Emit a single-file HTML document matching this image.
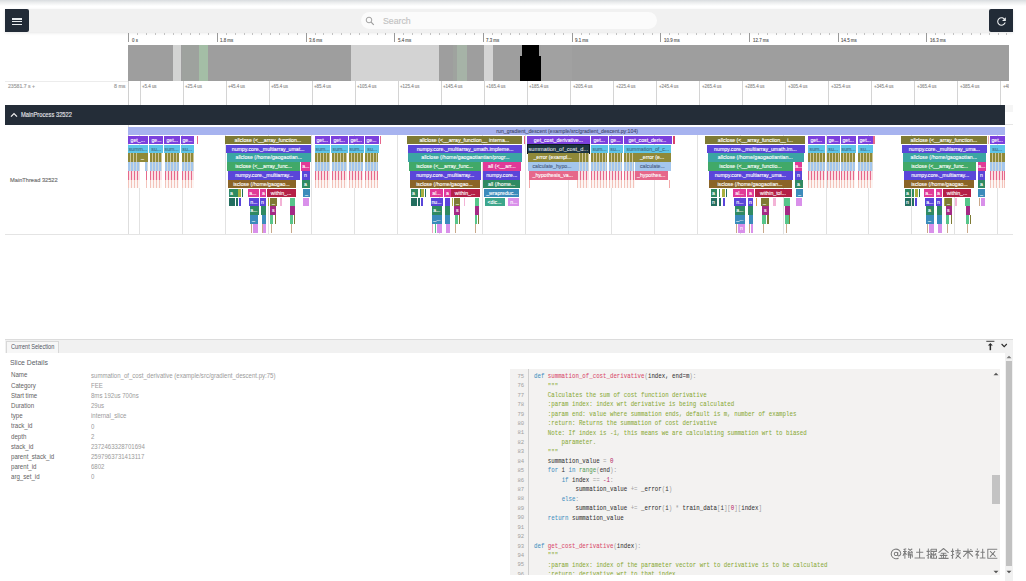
<!DOCTYPE html><html><head><meta charset="utf-8"><style>
html,body{margin:0;padding:0;}
body{width:1026px;height:581px;overflow:hidden;position:relative;background:#fff;font-family:"Liberation Sans",sans-serif;}
body div{position:absolute;box-sizing:border-box;}
.t{-webkit-text-stroke:0.14px currentColor;}
.c{-webkit-text-stroke:0.05px currentColor;}
.n{}
.s{height:8.5px;overflow:hidden;white-space:nowrap;text-align:center;font-size:5.6px;line-height:8.5px;color:#fff;}
.s span{transform:scaleX(0.93);-webkit-text-stroke:0.12px currentColor;}
.s span{display:inline-block;}
</style></head><body>
<div style="left:0.00px;top:0.00px;width:1026.00px;height:6.00px;background:linear-gradient(#d9dcdf,#e9ebec 35%,#fff);"></div>
<div style="left:5.00px;top:9.00px;width:1008.00px;height:23.30px;background:#f1f1f1;box-shadow:0 1px 3px rgba(0,0,0,0.10);"></div>
<div style="left:5.20px;top:9.00px;width:23.40px;height:23.20px;background:#222b37;border-radius:0 2px 2px 0;"></div>
<div style="left:12.00px;top:18.40px;width:10.00px;height:1.40px;background:#e8ecef;"></div>
<div style="left:12.00px;top:20.90px;width:10.00px;height:1.40px;background:#e8ecef;"></div>
<div style="left:12.00px;top:23.50px;width:10.00px;height:1.40px;background:#e8ecef;"></div>
<div style="left:989.30px;top:9.00px;width:23.70px;height:23.40px;background:#222b37;border-radius:2px 0 0 2px;"></div>
<svg style="position:absolute;left:994.9px;top:14.5px" width="13" height="13" viewBox="0 0 24 24"><path fill="#eef0f2" d="M17.65 6.35C16.2 4.9 14.21 4 12 4c-4.42 0-7.99 3.58-7.99 8s3.57 8 7.99 8c3.73 0 6.840-2.55 7.73-6h-2.08c-.82 2.33-3.04 4-5.65 4-3.31 0-6-2.69-6-6s2.69-6 6-6c1.66 0 3.14.69 4.22 1.78L13 11h7V4l-2.35 2.35z"/></svg>
<div style="left:361.20px;top:12.30px;width:296.00px;height:17.10px;background:#fbfbfb;border-radius:8.5px;"></div>
<svg style="position:absolute;left:364.5px;top:15.8px" width="10" height="10" viewBox="0 0 10 10"><circle cx="4" cy="4" r="2.8" fill="none" stroke="#9c9c9c" stroke-width="0.95"/><path d="M6.1 6.1 L8.8 8.8" stroke="#9c9c9c" stroke-width="1.15"/></svg>
<div class="t" style="left:383.00px;top:16.48px;font-size:9.2px;line-height:11.04px;color:#c2c2c2;font-family:'Liberation Sans', sans-serif;white-space:pre;transform:scaleX(0.95);transform-origin:0 50%;">Search</div>
<div style="left:128.15px;top:33.10px;width:0.90px;height:9.00px;background:#9a9a9a;"></div>
<div style="left:137.12px;top:33.00px;width:0.70px;height:1.60px;background:#c2c2c2;"></div>
<div style="left:145.99px;top:33.00px;width:0.70px;height:1.60px;background:#c2c2c2;"></div>
<div style="left:154.86px;top:33.00px;width:0.70px;height:1.60px;background:#c2c2c2;"></div>
<div style="left:163.73px;top:33.00px;width:0.70px;height:1.60px;background:#c2c2c2;"></div>
<div style="left:172.60px;top:33.00px;width:0.70px;height:1.60px;background:#c2c2c2;"></div>
<div style="left:181.47px;top:33.00px;width:0.70px;height:1.60px;background:#c2c2c2;"></div>
<div style="left:190.34px;top:33.00px;width:0.70px;height:1.60px;background:#c2c2c2;"></div>
<div style="left:199.21px;top:33.00px;width:0.70px;height:1.60px;background:#c2c2c2;"></div>
<div style="left:208.08px;top:33.00px;width:0.70px;height:1.60px;background:#c2c2c2;"></div>
<div style="left:216.85px;top:33.10px;width:0.90px;height:9.00px;background:#9a9a9a;"></div>
<div style="left:225.82px;top:33.00px;width:0.70px;height:1.60px;background:#c2c2c2;"></div>
<div style="left:234.69px;top:33.00px;width:0.70px;height:1.60px;background:#c2c2c2;"></div>
<div style="left:243.56px;top:33.00px;width:0.70px;height:1.60px;background:#c2c2c2;"></div>
<div style="left:252.43px;top:33.00px;width:0.70px;height:1.60px;background:#c2c2c2;"></div>
<div style="left:261.30px;top:33.00px;width:0.70px;height:1.60px;background:#c2c2c2;"></div>
<div style="left:270.17px;top:33.00px;width:0.70px;height:1.60px;background:#c2c2c2;"></div>
<div style="left:279.04px;top:33.00px;width:0.70px;height:1.60px;background:#c2c2c2;"></div>
<div style="left:287.91px;top:33.00px;width:0.70px;height:1.60px;background:#c2c2c2;"></div>
<div style="left:296.78px;top:33.00px;width:0.70px;height:1.60px;background:#c2c2c2;"></div>
<div style="left:305.55px;top:33.10px;width:0.90px;height:9.00px;background:#9a9a9a;"></div>
<div style="left:314.52px;top:33.00px;width:0.70px;height:1.60px;background:#c2c2c2;"></div>
<div style="left:323.39px;top:33.00px;width:0.70px;height:1.60px;background:#c2c2c2;"></div>
<div style="left:332.26px;top:33.00px;width:0.70px;height:1.60px;background:#c2c2c2;"></div>
<div style="left:341.13px;top:33.00px;width:0.70px;height:1.60px;background:#c2c2c2;"></div>
<div style="left:350.00px;top:33.00px;width:0.70px;height:1.60px;background:#c2c2c2;"></div>
<div style="left:358.87px;top:33.00px;width:0.70px;height:1.60px;background:#c2c2c2;"></div>
<div style="left:367.74px;top:33.00px;width:0.70px;height:1.60px;background:#c2c2c2;"></div>
<div style="left:376.61px;top:33.00px;width:0.70px;height:1.60px;background:#c2c2c2;"></div>
<div style="left:385.48px;top:33.00px;width:0.70px;height:1.60px;background:#c2c2c2;"></div>
<div style="left:394.25px;top:33.10px;width:0.90px;height:9.00px;background:#9a9a9a;"></div>
<div style="left:403.22px;top:33.00px;width:0.70px;height:1.60px;background:#c2c2c2;"></div>
<div style="left:412.09px;top:33.00px;width:0.70px;height:1.60px;background:#c2c2c2;"></div>
<div style="left:420.96px;top:33.00px;width:0.70px;height:1.60px;background:#c2c2c2;"></div>
<div style="left:429.83px;top:33.00px;width:0.70px;height:1.60px;background:#c2c2c2;"></div>
<div style="left:438.70px;top:33.00px;width:0.70px;height:1.60px;background:#c2c2c2;"></div>
<div style="left:447.57px;top:33.00px;width:0.70px;height:1.60px;background:#c2c2c2;"></div>
<div style="left:456.44px;top:33.00px;width:0.70px;height:1.60px;background:#c2c2c2;"></div>
<div style="left:465.31px;top:33.00px;width:0.70px;height:1.60px;background:#c2c2c2;"></div>
<div style="left:474.18px;top:33.00px;width:0.70px;height:1.60px;background:#c2c2c2;"></div>
<div style="left:482.95px;top:33.10px;width:0.90px;height:9.00px;background:#9a9a9a;"></div>
<div style="left:491.92px;top:33.00px;width:0.70px;height:1.60px;background:#c2c2c2;"></div>
<div style="left:500.79px;top:33.00px;width:0.70px;height:1.60px;background:#c2c2c2;"></div>
<div style="left:509.66px;top:33.00px;width:0.70px;height:1.60px;background:#c2c2c2;"></div>
<div style="left:518.53px;top:33.00px;width:0.70px;height:1.60px;background:#c2c2c2;"></div>
<div style="left:527.40px;top:33.00px;width:0.70px;height:1.60px;background:#c2c2c2;"></div>
<div style="left:536.27px;top:33.00px;width:0.70px;height:1.60px;background:#c2c2c2;"></div>
<div style="left:545.14px;top:33.00px;width:0.70px;height:1.60px;background:#c2c2c2;"></div>
<div style="left:554.01px;top:33.00px;width:0.70px;height:1.60px;background:#c2c2c2;"></div>
<div style="left:562.88px;top:33.00px;width:0.70px;height:1.60px;background:#c2c2c2;"></div>
<div style="left:571.65px;top:33.10px;width:0.90px;height:9.00px;background:#9a9a9a;"></div>
<div style="left:580.62px;top:33.00px;width:0.70px;height:1.60px;background:#c2c2c2;"></div>
<div style="left:589.49px;top:33.00px;width:0.70px;height:1.60px;background:#c2c2c2;"></div>
<div style="left:598.36px;top:33.00px;width:0.70px;height:1.60px;background:#c2c2c2;"></div>
<div style="left:607.23px;top:33.00px;width:0.70px;height:1.60px;background:#c2c2c2;"></div>
<div style="left:616.10px;top:33.00px;width:0.70px;height:1.60px;background:#c2c2c2;"></div>
<div style="left:624.97px;top:33.00px;width:0.70px;height:1.60px;background:#c2c2c2;"></div>
<div style="left:633.84px;top:33.00px;width:0.70px;height:1.60px;background:#c2c2c2;"></div>
<div style="left:642.71px;top:33.00px;width:0.70px;height:1.60px;background:#c2c2c2;"></div>
<div style="left:651.58px;top:33.00px;width:0.70px;height:1.60px;background:#c2c2c2;"></div>
<div style="left:660.35px;top:33.10px;width:0.90px;height:9.00px;background:#9a9a9a;"></div>
<div style="left:669.32px;top:33.00px;width:0.70px;height:1.60px;background:#c2c2c2;"></div>
<div style="left:678.19px;top:33.00px;width:0.70px;height:1.60px;background:#c2c2c2;"></div>
<div style="left:687.06px;top:33.00px;width:0.70px;height:1.60px;background:#c2c2c2;"></div>
<div style="left:695.93px;top:33.00px;width:0.70px;height:1.60px;background:#c2c2c2;"></div>
<div style="left:704.80px;top:33.00px;width:0.70px;height:1.60px;background:#c2c2c2;"></div>
<div style="left:713.67px;top:33.00px;width:0.70px;height:1.60px;background:#c2c2c2;"></div>
<div style="left:722.54px;top:33.00px;width:0.70px;height:1.60px;background:#c2c2c2;"></div>
<div style="left:731.41px;top:33.00px;width:0.70px;height:1.60px;background:#c2c2c2;"></div>
<div style="left:740.28px;top:33.00px;width:0.70px;height:1.60px;background:#c2c2c2;"></div>
<div style="left:749.05px;top:33.10px;width:0.90px;height:9.00px;background:#9a9a9a;"></div>
<div style="left:758.02px;top:33.00px;width:0.70px;height:1.60px;background:#c2c2c2;"></div>
<div style="left:766.89px;top:33.00px;width:0.70px;height:1.60px;background:#c2c2c2;"></div>
<div style="left:775.76px;top:33.00px;width:0.70px;height:1.60px;background:#c2c2c2;"></div>
<div style="left:784.63px;top:33.00px;width:0.70px;height:1.60px;background:#c2c2c2;"></div>
<div style="left:793.50px;top:33.00px;width:0.70px;height:1.60px;background:#c2c2c2;"></div>
<div style="left:802.37px;top:33.00px;width:0.70px;height:1.60px;background:#c2c2c2;"></div>
<div style="left:811.24px;top:33.00px;width:0.70px;height:1.60px;background:#c2c2c2;"></div>
<div style="left:820.11px;top:33.00px;width:0.70px;height:1.60px;background:#c2c2c2;"></div>
<div style="left:828.98px;top:33.00px;width:0.70px;height:1.60px;background:#c2c2c2;"></div>
<div style="left:837.75px;top:33.10px;width:0.90px;height:9.00px;background:#9a9a9a;"></div>
<div style="left:846.72px;top:33.00px;width:0.70px;height:1.60px;background:#c2c2c2;"></div>
<div style="left:855.59px;top:33.00px;width:0.70px;height:1.60px;background:#c2c2c2;"></div>
<div style="left:864.46px;top:33.00px;width:0.70px;height:1.60px;background:#c2c2c2;"></div>
<div style="left:873.33px;top:33.00px;width:0.70px;height:1.60px;background:#c2c2c2;"></div>
<div style="left:882.20px;top:33.00px;width:0.70px;height:1.60px;background:#c2c2c2;"></div>
<div style="left:891.07px;top:33.00px;width:0.70px;height:1.60px;background:#c2c2c2;"></div>
<div style="left:899.94px;top:33.00px;width:0.70px;height:1.60px;background:#c2c2c2;"></div>
<div style="left:908.81px;top:33.00px;width:0.70px;height:1.60px;background:#c2c2c2;"></div>
<div style="left:917.68px;top:33.00px;width:0.70px;height:1.60px;background:#c2c2c2;"></div>
<div style="left:926.45px;top:33.10px;width:0.90px;height:9.00px;background:#9a9a9a;"></div>
<div style="left:935.42px;top:33.00px;width:0.70px;height:1.60px;background:#c2c2c2;"></div>
<div style="left:944.29px;top:33.00px;width:0.70px;height:1.60px;background:#c2c2c2;"></div>
<div style="left:953.16px;top:33.00px;width:0.70px;height:1.60px;background:#c2c2c2;"></div>
<div style="left:962.03px;top:33.00px;width:0.70px;height:1.60px;background:#c2c2c2;"></div>
<div style="left:970.90px;top:33.00px;width:0.70px;height:1.60px;background:#c2c2c2;"></div>
<div style="left:979.77px;top:33.00px;width:0.70px;height:1.60px;background:#c2c2c2;"></div>
<div style="left:988.64px;top:33.00px;width:0.70px;height:1.60px;background:#c2c2c2;"></div>
<div style="left:997.51px;top:33.00px;width:0.70px;height:1.60px;background:#c2c2c2;"></div>
<div style="left:1006.38px;top:33.00px;width:0.70px;height:1.60px;background:#c2c2c2;"></div>
<div class="t" style="left:131.60px;top:37.46px;font-size:5.2px;line-height:6.24px;color:#5a5a5a;font-family:'Liberation Sans', sans-serif;white-space:pre;transform:scaleX(0.85);transform-origin:0 50%;">0 s</div>
<div class="t" style="left:220.30px;top:37.46px;font-size:5.2px;line-height:6.24px;color:#5a5a5a;font-family:'Liberation Sans', sans-serif;white-space:pre;transform:scaleX(0.85);transform-origin:0 50%;">1.8 ms</div>
<div class="t" style="left:309.00px;top:37.46px;font-size:5.2px;line-height:6.24px;color:#5a5a5a;font-family:'Liberation Sans', sans-serif;white-space:pre;transform:scaleX(0.85);transform-origin:0 50%;">3.6 ms</div>
<div class="t" style="left:397.70px;top:37.46px;font-size:5.2px;line-height:6.24px;color:#5a5a5a;font-family:'Liberation Sans', sans-serif;white-space:pre;transform:scaleX(0.85);transform-origin:0 50%;">5.4 ms</div>
<div class="t" style="left:486.40px;top:37.46px;font-size:5.2px;line-height:6.24px;color:#5a5a5a;font-family:'Liberation Sans', sans-serif;white-space:pre;transform:scaleX(0.85);transform-origin:0 50%;">7.3 ms</div>
<div class="t" style="left:575.10px;top:37.46px;font-size:5.2px;line-height:6.24px;color:#5a5a5a;font-family:'Liberation Sans', sans-serif;white-space:pre;transform:scaleX(0.85);transform-origin:0 50%;">9.1 ms</div>
<div class="t" style="left:663.80px;top:37.46px;font-size:5.2px;line-height:6.24px;color:#5a5a5a;font-family:'Liberation Sans', sans-serif;white-space:pre;transform:scaleX(0.85);transform-origin:0 50%;">10.9 ms</div>
<div class="t" style="left:752.50px;top:37.46px;font-size:5.2px;line-height:6.24px;color:#5a5a5a;font-family:'Liberation Sans', sans-serif;white-space:pre;transform:scaleX(0.85);transform-origin:0 50%;">12.7 ms</div>
<div class="t" style="left:841.20px;top:37.46px;font-size:5.2px;line-height:6.24px;color:#5a5a5a;font-family:'Liberation Sans', sans-serif;white-space:pre;transform:scaleX(0.85);transform-origin:0 50%;">14.5 ms</div>
<div class="t" style="left:929.90px;top:37.46px;font-size:5.2px;line-height:6.24px;color:#5a5a5a;font-family:'Liberation Sans', sans-serif;white-space:pre;transform:scaleX(0.85);transform-origin:0 50%;">16.3 ms</div>
<div style="left:128.20px;top:44.90px;width:880.60px;height:36.50px;background:#9e9e9e;"></div>
<div style="left:172.80px;top:44.90px;width:8.70px;height:36.50px;background:#d3d4d3;"></div>
<div style="left:181.50px;top:44.90px;width:17.50px;height:36.50px;background:#9ea29e;"></div>
<div style="left:199.00px;top:44.90px;width:9.40px;height:36.50px;background:#a4bea6;"></div>
<div style="left:351.10px;top:44.90px;width:88.20px;height:36.50px;background:#d3d3d3;"></div>
<div style="left:452.60px;top:44.90px;width:4.40px;height:36.50px;background:#9fa39f;"></div>
<div style="left:457.00px;top:44.90px;width:9.50px;height:36.50px;background:#a6b3a7;"></div>
<div style="left:483.70px;top:44.90px;width:9.00px;height:36.50px;background:#d4d4d4;"></div>
<div style="left:520.00px;top:56.00px;width:20.50px;height:25.40px;background:#000;"></div>
<div style="left:521.80px;top:44.90px;width:17.20px;height:11.60px;background:#000;"></div>
<div style="left:540.50px;top:44.90px;width:31.50px;height:36.50px;background:#a1a1a1;"></div>
<div style="left:5.00px;top:81.30px;width:123.20px;height:0.60px;background:#ececec;"></div>
<div style="left:127.80px;top:81.40px;width:0.80px;height:23.40px;background:#d0d0d0;"></div>
<div class="t" style="left:8.00px;top:83.11px;font-size:5.3px;line-height:6.36px;color:#9a9a9a;font-family:'Liberation Sans', sans-serif;white-space:pre;transform:scaleX(0.97);transform-origin:0 50%;">23581.7 s +</div>
<div class="t" style="right:900.50px;top:83.11px;font-size:5.3px;line-height:6.36px;color:#9a9a9a;font-family:'Liberation Sans', sans-serif;white-space:pre;">8 ms</div>
<div style="left:128.6px;top:81.4px;width:880.2px;height:23.4px;overflow:hidden;">
<div style="left:-128.6px;top:-81.4px;width:1026px;height:581px;">
<div style="left:139.70px;top:81.40px;width:0.80px;height:23.40px;background:#d4d4d4;"></div>
<div class="t" style="left:142.20px;top:82.95px;font-size:5.0px;line-height:6.00px;color:#8e8e8e;font-family:'Liberation Sans', sans-serif;white-space:pre;transform:scaleX(0.88);transform-origin:0 50%;">+5.4 us</div>
<div style="left:182.73px;top:81.40px;width:0.80px;height:23.40px;background:#d4d4d4;"></div>
<div class="t" style="left:185.23px;top:82.95px;font-size:5.0px;line-height:6.00px;color:#8e8e8e;font-family:'Liberation Sans', sans-serif;white-space:pre;transform:scaleX(0.88);transform-origin:0 50%;">+25.4 us</div>
<div style="left:225.76px;top:81.40px;width:0.80px;height:23.40px;background:#d4d4d4;"></div>
<div class="t" style="left:228.26px;top:82.95px;font-size:5.0px;line-height:6.00px;color:#8e8e8e;font-family:'Liberation Sans', sans-serif;white-space:pre;transform:scaleX(0.88);transform-origin:0 50%;">+45.4 us</div>
<div style="left:268.79px;top:81.40px;width:0.80px;height:23.40px;background:#d4d4d4;"></div>
<div class="t" style="left:271.29px;top:82.95px;font-size:5.0px;line-height:6.00px;color:#8e8e8e;font-family:'Liberation Sans', sans-serif;white-space:pre;transform:scaleX(0.88);transform-origin:0 50%;">+65.4 us</div>
<div style="left:311.82px;top:81.40px;width:0.80px;height:23.40px;background:#d4d4d4;"></div>
<div class="t" style="left:314.32px;top:82.95px;font-size:5.0px;line-height:6.00px;color:#8e8e8e;font-family:'Liberation Sans', sans-serif;white-space:pre;transform:scaleX(0.88);transform-origin:0 50%;">+85.4 us</div>
<div style="left:354.85px;top:81.40px;width:0.80px;height:23.40px;background:#d4d4d4;"></div>
<div class="t" style="left:357.35px;top:82.95px;font-size:5.0px;line-height:6.00px;color:#8e8e8e;font-family:'Liberation Sans', sans-serif;white-space:pre;transform:scaleX(0.88);transform-origin:0 50%;">+105.4 us</div>
<div style="left:397.88px;top:81.40px;width:0.80px;height:23.40px;background:#d4d4d4;"></div>
<div class="t" style="left:400.38px;top:82.95px;font-size:5.0px;line-height:6.00px;color:#8e8e8e;font-family:'Liberation Sans', sans-serif;white-space:pre;transform:scaleX(0.88);transform-origin:0 50%;">+125.4 us</div>
<div style="left:440.91px;top:81.40px;width:0.80px;height:23.40px;background:#d4d4d4;"></div>
<div class="t" style="left:443.41px;top:82.95px;font-size:5.0px;line-height:6.00px;color:#8e8e8e;font-family:'Liberation Sans', sans-serif;white-space:pre;transform:scaleX(0.88);transform-origin:0 50%;">+145.4 us</div>
<div style="left:483.94px;top:81.40px;width:0.80px;height:23.40px;background:#d4d4d4;"></div>
<div class="t" style="left:486.44px;top:82.95px;font-size:5.0px;line-height:6.00px;color:#8e8e8e;font-family:'Liberation Sans', sans-serif;white-space:pre;transform:scaleX(0.88);transform-origin:0 50%;">+165.4 us</div>
<div style="left:526.97px;top:81.40px;width:0.80px;height:23.40px;background:#d4d4d4;"></div>
<div class="t" style="left:529.47px;top:82.95px;font-size:5.0px;line-height:6.00px;color:#8e8e8e;font-family:'Liberation Sans', sans-serif;white-space:pre;transform:scaleX(0.88);transform-origin:0 50%;">+185.4 us</div>
<div style="left:570.00px;top:81.40px;width:0.80px;height:23.40px;background:#d4d4d4;"></div>
<div class="t" style="left:572.50px;top:82.95px;font-size:5.0px;line-height:6.00px;color:#8e8e8e;font-family:'Liberation Sans', sans-serif;white-space:pre;transform:scaleX(0.88);transform-origin:0 50%;">+205.4 us</div>
<div style="left:613.03px;top:81.40px;width:0.80px;height:23.40px;background:#d4d4d4;"></div>
<div class="t" style="left:615.53px;top:82.95px;font-size:5.0px;line-height:6.00px;color:#8e8e8e;font-family:'Liberation Sans', sans-serif;white-space:pre;transform:scaleX(0.88);transform-origin:0 50%;">+225.4 us</div>
<div style="left:656.06px;top:81.40px;width:0.80px;height:23.40px;background:#d4d4d4;"></div>
<div class="t" style="left:658.56px;top:82.95px;font-size:5.0px;line-height:6.00px;color:#8e8e8e;font-family:'Liberation Sans', sans-serif;white-space:pre;transform:scaleX(0.88);transform-origin:0 50%;">+245.4 us</div>
<div style="left:699.09px;top:81.40px;width:0.80px;height:23.40px;background:#d4d4d4;"></div>
<div class="t" style="left:701.59px;top:82.95px;font-size:5.0px;line-height:6.00px;color:#8e8e8e;font-family:'Liberation Sans', sans-serif;white-space:pre;transform:scaleX(0.88);transform-origin:0 50%;">+265.4 us</div>
<div style="left:742.12px;top:81.40px;width:0.80px;height:23.40px;background:#d4d4d4;"></div>
<div class="t" style="left:744.62px;top:82.95px;font-size:5.0px;line-height:6.00px;color:#8e8e8e;font-family:'Liberation Sans', sans-serif;white-space:pre;transform:scaleX(0.88);transform-origin:0 50%;">+285.4 us</div>
<div style="left:785.15px;top:81.40px;width:0.80px;height:23.40px;background:#d4d4d4;"></div>
<div class="t" style="left:787.65px;top:82.95px;font-size:5.0px;line-height:6.00px;color:#8e8e8e;font-family:'Liberation Sans', sans-serif;white-space:pre;transform:scaleX(0.88);transform-origin:0 50%;">+305.4 us</div>
<div style="left:828.18px;top:81.40px;width:0.80px;height:23.40px;background:#d4d4d4;"></div>
<div class="t" style="left:830.68px;top:82.95px;font-size:5.0px;line-height:6.00px;color:#8e8e8e;font-family:'Liberation Sans', sans-serif;white-space:pre;transform:scaleX(0.88);transform-origin:0 50%;">+325.4 us</div>
<div style="left:871.21px;top:81.40px;width:0.80px;height:23.40px;background:#d4d4d4;"></div>
<div class="t" style="left:873.71px;top:82.95px;font-size:5.0px;line-height:6.00px;color:#8e8e8e;font-family:'Liberation Sans', sans-serif;white-space:pre;transform:scaleX(0.88);transform-origin:0 50%;">+345.4 us</div>
<div style="left:914.24px;top:81.40px;width:0.80px;height:23.40px;background:#d4d4d4;"></div>
<div class="t" style="left:916.74px;top:82.95px;font-size:5.0px;line-height:6.00px;color:#8e8e8e;font-family:'Liberation Sans', sans-serif;white-space:pre;transform:scaleX(0.88);transform-origin:0 50%;">+365.4 us</div>
<div style="left:957.27px;top:81.40px;width:0.80px;height:23.40px;background:#d4d4d4;"></div>
<div class="t" style="left:959.77px;top:82.95px;font-size:5.0px;line-height:6.00px;color:#8e8e8e;font-family:'Liberation Sans', sans-serif;white-space:pre;transform:scaleX(0.88);transform-origin:0 50%;">+385.4 us</div>
<div style="left:1000.30px;top:81.40px;width:0.80px;height:23.40px;background:#d4d4d4;"></div>
<div class="t" style="left:1002.80px;top:82.95px;font-size:5.0px;line-height:6.00px;color:#8e8e8e;font-family:'Liberation Sans', sans-serif;white-space:pre;transform:scaleX(0.88);transform-origin:0 50%;">+405.4 us</div>
</div></div>
<div style="left:5.10px;top:105.00px;width:1000.30px;height:19.80px;background:#242d38;"></div>
<div style="left:1005.40px;top:105.00px;width:7.60px;height:7.00px;background:#f5f5f5;"></div>
<div style="left:1005.40px;top:124.00px;width:7.60px;height:0.70px;background:#e6e6e6;"></div>
<svg style="position:absolute;left:9.5px;top:112px" width="8" height="6" viewBox="0 0 8 6"><path d="M1 4.6 L4 1.6 L7 4.6" fill="none" stroke="#f0f0f0" stroke-width="1.3"/></svg>
<div class="t" style="left:20.80px;top:111.42px;font-size:7.4px;line-height:8.88px;color:#e4e6ea;font-family:'Liberation Sans', sans-serif;white-space:pre;transform:scaleX(0.78);transform-origin:0 50%;">MainProcess 32522</div>
<div class="t" style="left:10.00px;top:177.47px;font-size:5.8px;line-height:6.96px;color:#6e6e6e;font-family:'Liberation Sans', sans-serif;white-space:pre;transform:scaleX(0.98);transform-origin:0 50%;">MainThread 32522</div>
<div style="left:127.70px;top:124.80px;width:0.80px;height:109.80px;background:#dedede;"></div>
<div style="left:139.10px;top:126.90px;width:0.80px;height:107.70px;background:#e2e2e2;"></div>
<div style="left:182.00px;top:126.90px;width:0.80px;height:107.70px;background:#e2e2e2;"></div>
<div style="left:224.90px;top:126.90px;width:0.80px;height:107.70px;background:#e2e2e2;"></div>
<div style="left:267.80px;top:126.90px;width:0.80px;height:107.70px;background:#e2e2e2;"></div>
<div style="left:310.70px;top:126.90px;width:0.80px;height:107.70px;background:#e2e2e2;"></div>
<div style="left:353.60px;top:126.90px;width:0.80px;height:107.70px;background:#e2e2e2;"></div>
<div style="left:396.50px;top:126.90px;width:0.80px;height:107.70px;background:#e2e2e2;"></div>
<div style="left:439.40px;top:126.90px;width:0.80px;height:107.70px;background:#e2e2e2;"></div>
<div style="left:482.30px;top:126.90px;width:0.80px;height:107.70px;background:#e2e2e2;"></div>
<div style="left:525.20px;top:126.90px;width:0.80px;height:107.70px;background:#e2e2e2;"></div>
<div style="left:568.10px;top:126.90px;width:0.80px;height:107.70px;background:#e2e2e2;"></div>
<div style="left:611.00px;top:126.90px;width:0.80px;height:107.70px;background:#e2e2e2;"></div>
<div style="left:653.90px;top:126.90px;width:0.80px;height:107.70px;background:#e2e2e2;"></div>
<div style="left:696.80px;top:126.90px;width:0.80px;height:107.70px;background:#e2e2e2;"></div>
<div style="left:739.70px;top:126.90px;width:0.80px;height:107.70px;background:#e2e2e2;"></div>
<div style="left:782.60px;top:126.90px;width:0.80px;height:107.70px;background:#e2e2e2;"></div>
<div style="left:825.50px;top:126.90px;width:0.80px;height:107.70px;background:#e2e2e2;"></div>
<div style="left:868.40px;top:126.90px;width:0.80px;height:107.70px;background:#e2e2e2;"></div>
<div style="left:911.30px;top:126.90px;width:0.80px;height:107.70px;background:#e2e2e2;"></div>
<div style="left:954.20px;top:126.90px;width:0.80px;height:107.70px;background:#e2e2e2;"></div>
<div style="left:997.10px;top:126.90px;width:0.80px;height:107.70px;background:#e2e2e2;"></div>
<div style="left:5.00px;top:234.20px;width:1008.00px;height:0.70px;background:#e4e4e4;"></div>
<div class="s" style="left:128.2px;top:126.90px;width:877.2px;background:#a7b3ef;color:#454c70"><span>run_gradient_descent (example/src/gradient_descent.py:104)</span></div>
<div class="s" style="left:128.10px;top:135.73px;width:19.80px;background:#7b40dd"><span style="color:#fff">get_...</span></div>
<div class="s" style="left:128.10px;top:144.56px;width:19.80px;background:#5ec4e8"><span style="color:#3d6f8a">summ...</span></div>
<div class="s" style="left:128.40px;top:153.39px;width:9.60px;background:repeating-linear-gradient(90deg,#8f8939 0 2.2px,#cfc596 2.2px 2.9px)"></div>
<div class="s" style="left:138.00px;top:153.39px;width:8.60px;background:#8f8939"><span style="color:#fff">_</span></div>
<div class="s" style="left:146.60px;top:153.39px;width:1.10px;background:repeating-linear-gradient(90deg,#8f8939 0 2.2px,#cfc596 2.2px 2.9px)"></div>
<div class="s" style="left:128.40px;top:162.22px;width:11.60px;background:repeating-linear-gradient(90deg,#a4c6ec 0 2.2px,#d3dada 2.2px 2.9px)"></div>
<div class="s" style="left:144.50px;top:162.22px;width:3.20px;background:repeating-linear-gradient(90deg,#a4c6ec 0 2.2px,#d3dada 2.2px 2.9px)"></div>
<div class="s" style="left:128.40px;top:171.05px;width:11.60px;background:repeating-linear-gradient(90deg,#e6688b 0 1.25px,#fae0e4 1.25px 2.9px)"></div>
<div class="s" style="left:146.00px;top:171.05px;width:1.30px;background:#e6688b"></div>
<div class="s" style="left:128.40px;top:179.88px;width:11.60px;background:repeating-linear-gradient(90deg,#f3c3bb 0 1.0px,#fdf6f4 1.0px 2.9px)"></div>
<div class="s" style="left:146.20px;top:179.88px;width:0.80px;background:#f3c3bb"></div>
<div class="s" style="left:149.30px;top:135.73px;width:13.40px;background:#7b40dd"><span style="color:#fff">ge...</span></div>
<div class="s" style="left:149.30px;top:144.56px;width:13.40px;background:#5ec4e8"><span style="color:#3d6f8a">su...</span></div>
<div class="s" style="left:149.60px;top:153.39px;width:12.80px;background:repeating-linear-gradient(90deg,#8f8939 0 2.2px,#cfc596 2.2px 2.9px)"></div>
<div class="s" style="left:149.60px;top:162.22px;width:12.80px;background:repeating-linear-gradient(90deg,#a4c6ec 0 2.2px,#d3dada 2.2px 2.9px)"></div>
<div class="s" style="left:149.60px;top:171.05px;width:12.80px;background:repeating-linear-gradient(90deg,#e6688b 0 1.25px,#fae0e4 1.25px 2.9px)"></div>
<div class="s" style="left:149.60px;top:179.88px;width:12.80px;background:repeating-linear-gradient(90deg,#f3c3bb 0 1.0px,#fdf6f4 1.0px 2.9px)"></div>
<div class="s" style="left:164.20px;top:135.73px;width:15.50px;background:#7b40dd"><span style="color:#fff">get...</span></div>
<div class="s" style="left:164.20px;top:144.56px;width:15.50px;background:#5ec4e8"><span style="color:#3d6f8a">sum...</span></div>
<div class="s" style="left:164.50px;top:153.39px;width:14.90px;background:repeating-linear-gradient(90deg,#8f8939 0 2.2px,#cfc596 2.2px 2.9px)"></div>
<div class="s" style="left:164.50px;top:162.22px;width:14.90px;background:repeating-linear-gradient(90deg,#a4c6ec 0 2.2px,#d3dada 2.2px 2.9px)"></div>
<div class="s" style="left:164.50px;top:171.05px;width:14.90px;background:repeating-linear-gradient(90deg,#e6688b 0 1.25px,#fae0e4 1.25px 2.9px)"></div>
<div class="s" style="left:164.50px;top:179.88px;width:14.90px;background:repeating-linear-gradient(90deg,#f3c3bb 0 1.0px,#fdf6f4 1.0px 2.9px)"></div>
<div class="s" style="left:181.20px;top:135.73px;width:12.80px;background:#7b40dd"><span style="color:#fff">ge...</span></div>
<div class="s" style="left:181.20px;top:144.56px;width:12.80px;background:#5ec4e8"><span style="color:#3d6f8a">su...</span></div>
<div class="s" style="left:181.50px;top:153.39px;width:12.20px;background:repeating-linear-gradient(90deg,#8f8939 0 2.2px,#cfc596 2.2px 2.9px)"></div>
<div class="s" style="left:181.50px;top:162.22px;width:12.20px;background:repeating-linear-gradient(90deg,#a4c6ec 0 2.2px,#d3dada 2.2px 2.9px)"></div>
<div class="s" style="left:181.50px;top:171.05px;width:12.20px;background:repeating-linear-gradient(90deg,#e6688b 0 1.25px,#fae0e4 1.25px 2.9px)"></div>
<div class="s" style="left:181.50px;top:179.88px;width:12.20px;background:repeating-linear-gradient(90deg,#f3c3bb 0 1.0px,#fdf6f4 1.0px 2.9px)"></div>
<div class="s" style="left:197.00px;top:135.73px;width:1.00px;background:#e6688b"></div>
<div class="s" style="left:314.60px;top:135.73px;width:15.40px;background:#7b40dd"><span style="color:#fff">get...</span></div>
<div class="s" style="left:314.60px;top:144.56px;width:15.40px;background:#5ec4e8"><span style="color:#3d6f8a">sum...</span></div>
<div class="s" style="left:314.90px;top:153.39px;width:14.80px;background:repeating-linear-gradient(90deg,#8f8939 0 2.2px,#cfc596 2.2px 2.9px)"></div>
<div class="s" style="left:314.90px;top:162.22px;width:14.80px;background:repeating-linear-gradient(90deg,#a4c6ec 0 2.2px,#d3dada 2.2px 2.9px)"></div>
<div class="s" style="left:314.90px;top:171.05px;width:14.80px;background:repeating-linear-gradient(90deg,#e6688b 0 1.25px,#fae0e4 1.25px 2.9px)"></div>
<div class="s" style="left:314.90px;top:179.88px;width:14.80px;background:repeating-linear-gradient(90deg,#f3c3bb 0 1.0px,#fdf6f4 1.0px 2.9px)"></div>
<div class="s" style="left:331.40px;top:135.73px;width:16.40px;background:#7b40dd"><span style="color:#fff">get...</span></div>
<div class="s" style="left:331.40px;top:144.56px;width:16.40px;background:#5ec4e8"><span style="color:#3d6f8a">sum...</span></div>
<div class="s" style="left:331.70px;top:153.39px;width:15.80px;background:repeating-linear-gradient(90deg,#8f8939 0 2.2px,#cfc596 2.2px 2.9px)"></div>
<div class="s" style="left:331.70px;top:162.22px;width:15.80px;background:repeating-linear-gradient(90deg,#a4c6ec 0 2.2px,#d3dada 2.2px 2.9px)"></div>
<div class="s" style="left:331.70px;top:171.05px;width:15.80px;background:repeating-linear-gradient(90deg,#e6688b 0 1.25px,#fae0e4 1.25px 2.9px)"></div>
<div class="s" style="left:331.70px;top:179.88px;width:15.80px;background:repeating-linear-gradient(90deg,#f3c3bb 0 1.0px,#fdf6f4 1.0px 2.9px)"></div>
<div class="s" style="left:349.00px;top:135.73px;width:14.80px;background:#7b40dd"><span style="color:#fff">get...</span></div>
<div class="s" style="left:349.00px;top:144.56px;width:14.80px;background:#5ec4e8"><span style="color:#3d6f8a">sum...</span></div>
<div class="s" style="left:349.30px;top:153.39px;width:14.20px;background:repeating-linear-gradient(90deg,#8f8939 0 2.2px,#cfc596 2.2px 2.9px)"></div>
<div class="s" style="left:349.30px;top:162.22px;width:14.20px;background:repeating-linear-gradient(90deg,#a4c6ec 0 2.2px,#d3dada 2.2px 2.9px)"></div>
<div class="s" style="left:349.30px;top:171.05px;width:14.20px;background:repeating-linear-gradient(90deg,#e6688b 0 1.25px,#fae0e4 1.25px 2.9px)"></div>
<div class="s" style="left:349.30px;top:179.88px;width:14.20px;background:repeating-linear-gradient(90deg,#f3c3bb 0 1.0px,#fdf6f4 1.0px 2.9px)"></div>
<div class="s" style="left:365.00px;top:135.73px;width:13.80px;background:#7b40dd"><span style="color:#fff">ge...</span></div>
<div class="s" style="left:365.00px;top:144.56px;width:13.80px;background:#5ec4e8"><span style="color:#3d6f8a">su...</span></div>
<div class="s" style="left:365.30px;top:153.39px;width:13.20px;background:repeating-linear-gradient(90deg,#8f8939 0 2.2px,#cfc596 2.2px 2.9px)"></div>
<div class="s" style="left:365.30px;top:162.22px;width:13.20px;background:repeating-linear-gradient(90deg,#a4c6ec 0 2.2px,#d3dada 2.2px 2.9px)"></div>
<div class="s" style="left:365.30px;top:171.05px;width:13.20px;background:repeating-linear-gradient(90deg,#e6688b 0 1.25px,#fae0e4 1.25px 2.9px)"></div>
<div class="s" style="left:365.30px;top:179.88px;width:13.20px;background:repeating-linear-gradient(90deg,#f3c3bb 0 1.0px,#fdf6f4 1.0px 2.9px)"></div>
<div class="s" style="left:379.80px;top:135.73px;width:1.00px;background:#e6688b"></div>
<div class="s" style="left:807.80px;top:135.73px;width:17.20px;background:#7b40dd"><span style="color:#fff">get...</span></div>
<div class="s" style="left:807.80px;top:144.56px;width:17.20px;background:#5ec4e8"><span style="color:#3d6f8a">sum...</span></div>
<div class="s" style="left:808.10px;top:153.39px;width:16.60px;background:repeating-linear-gradient(90deg,#8f8939 0 2.2px,#cfc596 2.2px 2.9px)"></div>
<div class="s" style="left:808.10px;top:162.22px;width:16.60px;background:repeating-linear-gradient(90deg,#a4c6ec 0 2.2px,#d3dada 2.2px 2.9px)"></div>
<div class="s" style="left:808.10px;top:171.05px;width:16.60px;background:repeating-linear-gradient(90deg,#e6688b 0 1.25px,#fae0e4 1.25px 2.9px)"></div>
<div class="s" style="left:808.10px;top:179.88px;width:16.60px;background:repeating-linear-gradient(90deg,#f3c3bb 0 1.0px,#fdf6f4 1.0px 2.9px)"></div>
<div class="s" style="left:826.50px;top:135.73px;width:13.50px;background:#7b40dd"><span style="color:#fff">ge...</span></div>
<div class="s" style="left:826.50px;top:144.56px;width:13.50px;background:#5ec4e8"><span style="color:#3d6f8a">su...</span></div>
<div class="s" style="left:826.80px;top:153.39px;width:12.90px;background:repeating-linear-gradient(90deg,#8f8939 0 2.2px,#cfc596 2.2px 2.9px)"></div>
<div class="s" style="left:826.80px;top:162.22px;width:12.90px;background:repeating-linear-gradient(90deg,#a4c6ec 0 2.2px,#d3dada 2.2px 2.9px)"></div>
<div class="s" style="left:826.80px;top:171.05px;width:12.90px;background:repeating-linear-gradient(90deg,#e6688b 0 1.25px,#fae0e4 1.25px 2.9px)"></div>
<div class="s" style="left:826.80px;top:179.88px;width:12.90px;background:repeating-linear-gradient(90deg,#f3c3bb 0 1.0px,#fdf6f4 1.0px 2.9px)"></div>
<div class="s" style="left:841.00px;top:135.73px;width:14.80px;background:#7b40dd"><span style="color:#fff">get...</span></div>
<div class="s" style="left:841.00px;top:144.56px;width:14.80px;background:#5ec4e8"><span style="color:#3d6f8a">sum...</span></div>
<div class="s" style="left:841.30px;top:153.39px;width:14.20px;background:repeating-linear-gradient(90deg,#8f8939 0 2.2px,#cfc596 2.2px 2.9px)"></div>
<div class="s" style="left:841.30px;top:162.22px;width:14.20px;background:repeating-linear-gradient(90deg,#a4c6ec 0 2.2px,#d3dada 2.2px 2.9px)"></div>
<div class="s" style="left:841.30px;top:171.05px;width:14.20px;background:repeating-linear-gradient(90deg,#e6688b 0 1.25px,#fae0e4 1.25px 2.9px)"></div>
<div class="s" style="left:841.30px;top:179.88px;width:14.20px;background:repeating-linear-gradient(90deg,#f3c3bb 0 1.0px,#fdf6f4 1.0px 2.9px)"></div>
<div class="s" style="left:857.50px;top:135.73px;width:15.60px;background:#7b40dd"><span style="color:#fff">get...</span></div>
<div class="s" style="left:857.50px;top:144.56px;width:15.60px;background:#5ec4e8"><span style="color:#3d6f8a">su...</span></div>
<div class="s" style="left:857.80px;top:153.39px;width:15.00px;background:repeating-linear-gradient(90deg,#8f8939 0 2.2px,#cfc596 2.2px 2.9px)"></div>
<div class="s" style="left:857.80px;top:162.22px;width:15.00px;background:repeating-linear-gradient(90deg,#a4c6ec 0 2.2px,#d3dada 2.2px 2.9px)"></div>
<div class="s" style="left:857.80px;top:171.05px;width:15.00px;background:repeating-linear-gradient(90deg,#e6688b 0 1.25px,#fae0e4 1.25px 2.9px)"></div>
<div class="s" style="left:857.80px;top:179.88px;width:15.00px;background:repeating-linear-gradient(90deg,#f3c3bb 0 1.0px,#fdf6f4 1.0px 2.9px)"></div>
<div class="s" style="left:873.30px;top:135.73px;width:1.70px;background:#e6688b"></div>
<div class="s" style="left:990.00px;top:135.73px;width:15.20px;background:#7b40dd"><span style="color:#fff">get...</span></div>
<div class="s" style="left:990.00px;top:144.56px;width:15.20px;background:#5ec4e8"><span style="color:#3d6f8a">su...</span></div>
<div class="s" style="left:990.30px;top:153.39px;width:14.60px;background:repeating-linear-gradient(90deg,#8f8939 0 2.2px,#cfc596 2.2px 2.9px)"></div>
<div class="s" style="left:990.30px;top:162.22px;width:14.60px;background:repeating-linear-gradient(90deg,#a4c6ec 0 2.2px,#d3dada 2.2px 2.9px)"></div>
<div class="s" style="left:990.30px;top:171.05px;width:14.60px;background:repeating-linear-gradient(90deg,#e6688b 0 1.25px,#fae0e4 1.25px 2.9px)"></div>
<div class="s" style="left:990.30px;top:179.88px;width:14.60px;background:repeating-linear-gradient(90deg,#f3c3bb 0 1.0px,#fdf6f4 1.0px 2.9px)"></div>
<div class="s" style="left:988.20px;top:135.73px;width:0.80px;background:#f0b0b0"></div>
<div class="s" style="left:524.30px;top:135.73px;width:0.90px;background:#e6688b"></div>
<div class="s" style="left:527.00px;top:135.73px;width:62.50px;background:#7b40dd"><span style="color:#fff">get_cost_derivative...</span></div>
<div class="s" style="left:526.6px;top:143.86px;width:63.3px;height:9.8px;line-height:9.8px;background:#1d3542;border:0.8px solid #0e1a22">summation_of_cost_d...</div>
<div class="s" style="left:528.00px;top:153.39px;width:48.80px;background:#8f8939"><span style="color:#fff">_error (exampl...</span></div>
<div class="s" style="left:528.00px;top:162.22px;width:48.50px;background:#a4c6ec"><span style="color:#4a5f86">calculate_hypo...</span></div>
<div class="s" style="left:529.00px;top:171.05px;width:47.50px;background:#e6688b"><span style="color:#fff">_hypothesis_va...</span></div>
<div class="s" style="left:529.30px;top:179.88px;width:0.70px;background:#f3a8a8"></div>
<div class="s" style="left:577.20px;top:153.39px;width:12.10px;background:repeating-linear-gradient(90deg,#8f8939 0 2.2px,#cfc596 2.2px 2.9px)"></div>
<div class="s" style="left:577.20px;top:162.22px;width:12.10px;background:repeating-linear-gradient(90deg,#a4c6ec 0 2.2px,#d3dada 2.2px 2.9px)"></div>
<div class="s" style="left:577.20px;top:171.05px;width:12.10px;background:repeating-linear-gradient(90deg,#e6688b 0 1.25px,#fae0e4 1.25px 2.9px)"></div>
<div class="s" style="left:577.20px;top:179.88px;width:12.10px;background:repeating-linear-gradient(90deg,#f3c3bb 0 1.0px,#fdf6f4 1.0px 2.9px)"></div>
<div class="s" style="left:591.00px;top:135.73px;width:16.70px;background:#7b40dd"><span style="color:#fff">get...</span></div>
<div class="s" style="left:591.00px;top:144.56px;width:16.70px;background:#5ec4e8"><span style="color:#3d6f8a">sum...</span></div>
<div class="s" style="left:591.30px;top:153.39px;width:16.10px;background:repeating-linear-gradient(90deg,#8f8939 0 2.2px,#cfc596 2.2px 2.9px)"></div>
<div class="s" style="left:591.30px;top:162.22px;width:16.10px;background:repeating-linear-gradient(90deg,#a4c6ec 0 2.2px,#d3dada 2.2px 2.9px)"></div>
<div class="s" style="left:591.30px;top:171.05px;width:16.10px;background:repeating-linear-gradient(90deg,#e6688b 0 1.25px,#fae0e4 1.25px 2.9px)"></div>
<div class="s" style="left:591.30px;top:179.88px;width:16.10px;background:repeating-linear-gradient(90deg,#f3c3bb 0 1.0px,#fdf6f4 1.0px 2.9px)"></div>
<div class="s" style="left:609.00px;top:135.73px;width:13.50px;background:#7b40dd"><span style="color:#fff">ge...</span></div>
<div class="s" style="left:609.00px;top:144.56px;width:13.50px;background:#5ec4e8"><span style="color:#3d6f8a">su...</span></div>
<div class="s" style="left:609.30px;top:153.39px;width:12.90px;background:repeating-linear-gradient(90deg,#8f8939 0 2.2px,#cfc596 2.2px 2.9px)"></div>
<div class="s" style="left:609.30px;top:162.22px;width:12.90px;background:repeating-linear-gradient(90deg,#a4c6ec 0 2.2px,#d3dada 2.2px 2.9px)"></div>
<div class="s" style="left:609.30px;top:171.05px;width:12.90px;background:repeating-linear-gradient(90deg,#e6688b 0 1.25px,#fae0e4 1.25px 2.9px)"></div>
<div class="s" style="left:609.30px;top:179.88px;width:12.90px;background:repeating-linear-gradient(90deg,#f3c3bb 0 1.0px,#fdf6f4 1.0px 2.9px)"></div>
<div class="s" style="left:623.80px;top:135.73px;width:48.00px;background:#7b40dd"><span style="color:#fff">get_cost_deriv...</span></div>
<div class="s" style="left:623.80px;top:144.56px;width:47.70px;background:#5ec4e8"><span style="color:#3d6f8a">summation_of_c...</span></div>
<div class="s" style="left:624.10px;top:153.39px;width:9.90px;background:repeating-linear-gradient(90deg,#8f8939 0 2.2px,#cfc596 2.2px 2.9px)"></div>
<div class="s" style="left:634.00px;top:153.39px;width:36.50px;background:#8f8939"><span style="color:#fff">_error (e...</span></div>
<div class="s" style="left:624.10px;top:162.22px;width:10.40px;background:repeating-linear-gradient(90deg,#a4c6ec 0 2.2px,#d3dada 2.2px 2.9px)"></div>
<div class="s" style="left:634.50px;top:162.22px;width:36.00px;background:#a4c6ec"><span style="color:#4a5f86">calculate...</span></div>
<div class="s" style="left:624.10px;top:171.05px;width:10.90px;background:repeating-linear-gradient(90deg,#e6688b 0 1.25px,#fae0e4 1.25px 2.9px)"></div>
<div class="s" style="left:635.00px;top:171.05px;width:33.00px;background:#e6688b"><span style="color:#fff">_hypothes...</span></div>
<div class="s" style="left:624.10px;top:179.88px;width:10.90px;background:repeating-linear-gradient(90deg,#f3c3bb 0 1.0px,#fdf6f4 1.0px 2.9px)"></div>
<div class="s" style="left:669.00px;top:179.88px;width:0.70px;background:#f3a8a8"></div>
<div class="s" style="left:673.00px;top:135.73px;width:1.80px;background:#d9406a"></div>
<div class="s" style="left:225.20px;top:135.73px;width:85.90px;background:#7e7a34"><span style="color:#fff">allclose (&lt;__array_function...</span></div>
<div class="s" style="left:225.80px;top:144.56px;width:85.20px;background:#5a46d9"><span style="color:#fff">numpy.core._multiarray_umat...</span></div>
<div class="s" style="left:226.70px;top:153.39px;width:84.30px;background:#3ba5a3"><span style="color:#fff">allclose (/home/gaogaotian...</span></div>
<div class="s" style="left:227.00px;top:162.22px;width:73.00px;background:#41a968"><span style="color:#fff">isclose (&lt;__array_func...</span></div>
<div class="s" style="left:301.00px;top:162.22px;width:9.00px;background:#e03a97"><span style="color:#fff">a...</span></div>
<div class="s" style="left:227.50px;top:171.05px;width:72.50px;background:#5a46d9"><span style="color:#fff">numpy.core._multiarray...</span></div>
<div class="s" style="left:301.50px;top:171.05px;width:8.50px;background:#5a46d9"><span style="color:#fff">n</span></div>
<div class="s" style="left:228.00px;top:179.88px;width:67.70px;background:#8b6427"><span style="color:#fff">isclose (/home/gaogao...</span></div>
<div class="s" style="left:302.00px;top:179.88px;width:7.70px;background:#2f8a62"><span style="color:#fff">a</span></div>
<div class="s" style="left:229.00px;top:188.71px;width:5.50px;background:#2f8a62"><span style="color:#fff">a</span></div>
<div class="s" style="left:235.00px;top:188.71px;width:2.50px;background:#2f8a62"></div>
<div class="s" style="left:238.00px;top:188.71px;width:3.00px;background:#aab03f"></div>
<div class="s" style="left:242.00px;top:188.71px;width:1.00px;background:#236e5f"></div>
<div class="s" style="left:248.20px;top:188.71px;width:10.40px;background:#e03a97"><span style="color:#fff">a...</span></div>
<div class="s" style="left:260.00px;top:188.71px;width:6.40px;background:#e03a97"><span style="color:#fff">a</span></div>
<div class="s" style="left:267.30px;top:188.71px;width:28.40px;background:#b42047"><span style="color:#fff">within_...</span></div>
<div class="s" style="left:303.00px;top:188.71px;width:6.50px;background:#3b8bbb"><span style="color:#fff">_</span></div>
<div class="s" style="left:229.00px;top:197.54px;width:5.50px;background:#236e5f"></div>
<div class="s" style="left:235.50px;top:197.54px;width:2.50px;background:#236e5f"></div>
<div class="s" style="left:239.00px;top:197.54px;width:2.00px;background:#5a46d9"></div>
<div class="s" style="left:249.00px;top:197.54px;width:9.60px;background:#5a46d9"><span style="color:#fff">n...</span></div>
<div class="s" style="left:260.00px;top:197.54px;width:6.00px;background:#5a46d9"><span style="color:#fff">n</span></div>
<div class="s" style="left:268.00px;top:197.54px;width:1.00px;background:#aab03f"></div>
<div class="s" style="left:270.00px;top:197.54px;width:7.00px;background:#7e7a34"><span style="color:#fff">_</span></div>
<div class="s" style="left:279.50px;top:197.54px;width:2.50px;background:#f3b3d6"></div>
<div class="s" style="left:290.00px;top:197.54px;width:5.00px;background:#57c58a"></div>
<div class="s" style="left:303.00px;top:197.54px;width:6.00px;background:#d990ea"></div>
<div class="s" style="left:250.00px;top:206.37px;width:8.60px;background:#2f8a62"><span style="color:#fff">a...</span></div>
<div class="s" style="left:261.00px;top:206.37px;width:4.60px;background:#2f8a62"></div>
<div class="s" style="left:270.00px;top:206.37px;width:6.30px;background:#a42a85"><span style="color:#fff">s</span></div>
<div class="s" style="left:290.00px;top:206.37px;width:4.80px;background:#a42a85"></div>
<div class="s" style="left:250.00px;top:215.20px;width:8.00px;background:#3b8bbb"><span style="color:#fff">_</span></div>
<div class="s" style="left:261.50px;top:215.20px;width:4.50px;background:#3b8bbb"></div>
<div class="s" style="left:270.00px;top:215.20px;width:3.00px;background:#57c58a"></div>
<div class="s" style="left:275.00px;top:215.20px;width:1.00px;background:#7e7a34"></div>
<div class="s" style="left:290.00px;top:215.20px;width:3.00px;background:#57c58a"></div>
<div class="s" style="left:294.00px;top:215.20px;width:1.00px;background:#7e7a34"></div>
<div class="s" style="left:251.00px;top:224.03px;width:0.80px;background:#c9a88a"></div>
<div class="s" style="left:253.00px;top:224.03px;width:5.00px;background:#d990ea"></div>
<div class="s" style="left:261.50px;top:224.03px;width:0.80px;background:#c9a88a"></div>
<div class="s" style="left:263.00px;top:224.03px;width:3.00px;background:#d990ea"></div>
<div class="s" style="left:271.00px;top:224.03px;width:0.70px;background:#c9a88a"></div>
<div class="s" style="left:291.00px;top:224.03px;width:0.70px;background:#c9a88a"></div>
<div class="s" style="left:406.90px;top:135.73px;width:115.50px;background:#7e7a34"><span style="color:#fff">allclose (&lt;__array_function__ interna...</span></div>
<div class="s" style="left:407.50px;top:144.56px;width:114.90px;background:#5a46d9"><span style="color:#fff">numpy.core._multiarray_umath.impleme...</span></div>
<div class="s" style="left:408.20px;top:153.39px;width:113.80px;background:#3ba5a3"><span style="color:#fff">allclose (/home/gaogaotiantian/progr...</span></div>
<div class="s" style="left:409.00px;top:162.22px;width:72.00px;background:#41a968"><span style="color:#fff">isclose (&lt;__array_func...</span></div>
<div class="s" style="left:482.50px;top:162.22px;width:38.00px;background:#e03a97"><span style="color:#fff">all (&lt;__arr...</span></div>
<div class="s" style="left:409.50px;top:171.05px;width:71.50px;background:#5a46d9"><span style="color:#fff">numpy.core._multiarray...</span></div>
<div class="s" style="left:483.00px;top:171.05px;width:37.00px;background:#5a46d9"><span style="color:#fff">numpy.core...</span></div>
<div class="s" style="left:409.80px;top:179.88px;width:70.00px;background:#8b6427"><span style="color:#fff">isclose (/home/gaogao...</span></div>
<div class="s" style="left:483.00px;top:179.88px;width:37.00px;background:#2f8a62"><span style="color:#fff">all (/home...</span></div>
<div class="s" style="left:410.50px;top:188.71px;width:6.00px;background:#2f8a62"><span style="color:#fff">a</span></div>
<div class="s" style="left:417.00px;top:188.71px;width:1.00px;background:#2f8a62"></div>
<div class="s" style="left:420.00px;top:188.71px;width:1.00px;background:#2f8a62"></div>
<div class="s" style="left:421.00px;top:188.71px;width:3.00px;background:#aab03f"></div>
<div class="s" style="left:424.50px;top:188.71px;width:0.70px;background:#236e5f"></div>
<div class="s" style="left:430.30px;top:188.71px;width:12.30px;background:#e03a97"><span style="color:#fff">al...</span></div>
<div class="s" style="left:444.00px;top:188.71px;width:6.80px;background:#e03a97"><span style="color:#fff">a</span></div>
<div class="s" style="left:451.00px;top:188.71px;width:28.50px;background:#b42047"><span style="color:#fff">within_...</span></div>
<div class="s" style="left:484.00px;top:188.71px;width:35.00px;background:#3b8bbb"><span style="color:#fff">_wrapreduc...</span></div>
<div class="s" style="left:410.50px;top:197.54px;width:6.00px;background:#236e5f"></div>
<div class="s" style="left:418.00px;top:197.54px;width:2.00px;background:#236e5f"></div>
<div class="s" style="left:421.00px;top:197.54px;width:2.00px;background:#5a46d9"></div>
<div class="s" style="left:430.80px;top:197.54px;width:11.80px;background:#5a46d9"><span style="color:#fff">nu...</span></div>
<div class="s" style="left:445.00px;top:197.54px;width:5.00px;background:#5a46d9"></div>
<div class="s" style="left:452.00px;top:197.54px;width:1.00px;background:#aab03f"></div>
<div class="s" style="left:454.00px;top:197.54px;width:6.40px;background:#7e7a34"><span style="color:#fff">_</span></div>
<div class="s" style="left:464.00px;top:197.54px;width:1.40px;background:#f3b3d6"></div>
<div class="s" style="left:474.50px;top:197.54px;width:4.50px;background:#57c58a"></div>
<div class="s" style="left:485.00px;top:197.54px;width:19.50px;background:#3da68c"><span style="color:#fff">&lt;dic...</span></div>
<div class="s" style="left:508.00px;top:197.54px;width:11.00px;background:#d990ea"><span style="color:#fff">n...</span></div>
<div class="s" style="left:431.50px;top:206.37px;width:10.50px;background:#2f8a62"><span style="color:#fff">a...</span></div>
<div class="s" style="left:445.00px;top:206.37px;width:5.00px;background:#2f8a62"></div>
<div class="s" style="left:454.00px;top:206.37px;width:6.00px;background:#a42a85"><span style="color:#fff">s</span></div>
<div class="s" style="left:474.50px;top:206.37px;width:4.00px;background:#a42a85"></div>
<div class="s" style="left:432.00px;top:215.20px;width:10.00px;background:#3b8bbb"><span style="color:#fff">_...</span></div>
<div class="s" style="left:445.00px;top:215.20px;width:5.00px;background:#3b8bbb"></div>
<div class="s" style="left:454.50px;top:215.20px;width:3.50px;background:#57c58a"></div>
<div class="s" style="left:459.00px;top:215.20px;width:1.00px;background:#7e7a34"></div>
<div class="s" style="left:474.50px;top:215.20px;width:2.50px;background:#57c58a"></div>
<div class="s" style="left:478.00px;top:215.20px;width:0.70px;background:#7e7a34"></div>
<div class="s" style="left:432.00px;top:224.03px;width:0.70px;background:#f0a0c0"></div>
<div class="s" style="left:435.00px;top:224.03px;width:0.70px;background:#57c58a"></div>
<div class="s" style="left:437.00px;top:224.03px;width:5.00px;background:#d990ea"></div>
<div class="s" style="left:446.00px;top:224.03px;width:4.00px;background:#d990ea"></div>
<div class="s" style="left:455.00px;top:224.03px;width:0.70px;background:#c9a88a"></div>
<div class="s" style="left:475.00px;top:224.03px;width:0.70px;background:#c9a88a"></div>
<div class="s" style="left:705.40px;top:135.73px;width:99.40px;background:#7e7a34"><span style="color:#fff">allclose (&lt;__array_function__ i...</span></div>
<div class="s" style="left:706.90px;top:144.56px;width:97.90px;background:#5a46d9"><span style="color:#fff">numpy.core._multiarray_umath.im...</span></div>
<div class="s" style="left:707.50px;top:153.39px;width:96.50px;background:#3ba5a3"><span style="color:#fff">allclose (/home/gaogaotiantian...</span></div>
<div class="s" style="left:708.00px;top:162.22px;width:85.00px;background:#41a968"><span style="color:#fff">isclose (&lt;__array_functio...</span></div>
<div class="s" style="left:794.50px;top:162.22px;width:7.90px;background:#e03a97"><span style="color:#fff">a...</span></div>
<div class="s" style="left:708.50px;top:171.05px;width:84.50px;background:#5a46d9"><span style="color:#fff">numpy.core._multiarray_uma...</span></div>
<div class="s" style="left:795.00px;top:171.05px;width:7.00px;background:#5a46d9"><span style="color:#fff">n</span></div>
<div class="s" style="left:709.20px;top:179.88px;width:82.50px;background:#8b6427"><span style="color:#fff">isclose (/home/gaogaotian...</span></div>
<div class="s" style="left:795.00px;top:179.88px;width:7.50px;background:#2f8a62"><span style="color:#fff">a</span></div>
<div class="s" style="left:710.50px;top:188.71px;width:6.80px;background:#2f8a62"><span style="color:#fff">a</span></div>
<div class="s" style="left:718.50px;top:188.71px;width:1.50px;background:#2f8a62"></div>
<div class="s" style="left:721.50px;top:188.71px;width:3.50px;background:#aab03f"></div>
<div class="s" style="left:725.50px;top:188.71px;width:1.00px;background:#236e5f"></div>
<div class="s" style="left:733.20px;top:188.71px;width:12.40px;background:#e03a97"><span style="color:#fff">al...</span></div>
<div class="s" style="left:747.00px;top:188.71px;width:7.00px;background:#e03a97"><span style="color:#fff">a</span></div>
<div class="s" style="left:755.00px;top:188.71px;width:36.50px;background:#b42047"><span style="color:#fff">within_tol...</span></div>
<div class="s" style="left:796.00px;top:188.71px;width:6.50px;background:#3b8bbb"><span style="color:#fff">_</span></div>
<div class="s" style="left:710.50px;top:197.54px;width:6.80px;background:#236e5f"><span style="color:#fff">n</span></div>
<div class="s" style="left:718.50px;top:197.54px;width:2.50px;background:#236e5f"></div>
<div class="s" style="left:722.50px;top:197.54px;width:2.50px;background:#5a46d9"></div>
<div class="s" style="left:734.00px;top:197.54px;width:11.60px;background:#5a46d9"><span style="color:#fff">n...</span></div>
<div class="s" style="left:747.50px;top:197.54px;width:5.50px;background:#5a46d9"><span style="color:#fff">n</span></div>
<div class="s" style="left:756.00px;top:197.54px;width:0.80px;background:#e0a050"></div>
<div class="s" style="left:761.00px;top:197.54px;width:8.00px;background:#7e7a34"><span style="color:#fff">_</span></div>
<div class="s" style="left:773.00px;top:197.54px;width:3.00px;background:#f3b3d6"></div>
<div class="s" style="left:784.00px;top:197.54px;width:5.60px;background:#57c58a"></div>
<div class="s" style="left:796.00px;top:197.54px;width:6.00px;background:#d990ea"></div>
<div class="s" style="left:734.50px;top:206.37px;width:10.50px;background:#2f8a62"><span style="color:#fff">a...</span></div>
<div class="s" style="left:748.00px;top:206.37px;width:5.00px;background:#2f8a62"></div>
<div class="s" style="left:761.50px;top:206.37px;width:7.50px;background:#a42a85"><span style="color:#fff">s</span></div>
<div class="s" style="left:785.00px;top:206.37px;width:5.00px;background:#a42a85"></div>
<div class="s" style="left:735.00px;top:215.20px;width:10.00px;background:#3b8bbb"><span style="color:#fff">_...</span></div>
<div class="s" style="left:748.50px;top:215.20px;width:4.50px;background:#3b8bbb"></div>
<div class="s" style="left:762.00px;top:215.20px;width:3.50px;background:#57c58a"></div>
<div class="s" style="left:767.00px;top:215.20px;width:2.00px;background:#7e7a34"></div>
<div class="s" style="left:785.00px;top:215.20px;width:3.50px;background:#57c58a"></div>
<div class="s" style="left:789.00px;top:215.20px;width:1.00px;background:#7e7a34"></div>
<div class="s" style="left:736.00px;top:224.03px;width:0.80px;background:#c9a88a"></div>
<div class="s" style="left:738.00px;top:224.03px;width:7.00px;background:#d990ea"><span style="color:#fff">n</span></div>
<div class="s" style="left:749.00px;top:224.03px;width:1.00px;background:#c9a88a"></div>
<div class="s" style="left:751.00px;top:224.03px;width:2.00px;background:#d990ea"></div>
<div class="s" style="left:762.50px;top:224.03px;width:0.70px;background:#c9a88a"></div>
<div class="s" style="left:786.00px;top:224.03px;width:0.70px;background:#c9a88a"></div>
<div class="s" style="left:901.00px;top:135.73px;width:85.80px;background:#7e7a34"><span style="color:#fff">allclose (&lt;__array_function...</span></div>
<div class="s" style="left:902.00px;top:144.56px;width:84.50px;background:#5a46d9"><span style="color:#fff">numpy.core._multiarray_uma...</span></div>
<div class="s" style="left:902.50px;top:153.39px;width:83.50px;background:#3ba5a3"><span style="color:#fff">allclose (/home/gaogaotian...</span></div>
<div class="s" style="left:903.00px;top:162.22px;width:73.00px;background:#41a968"><span style="color:#fff">isclose (&lt;__array_func...</span></div>
<div class="s" style="left:977.50px;top:162.22px;width:8.00px;background:#e03a97"><span style="color:#fff">a...</span></div>
<div class="s" style="left:903.50px;top:171.05px;width:72.50px;background:#5a46d9"><span style="color:#fff">numpy.core._multiarray...</span></div>
<div class="s" style="left:978.00px;top:171.05px;width:7.00px;background:#5a46d9"><span style="color:#fff">n</span></div>
<div class="s" style="left:904.00px;top:179.88px;width:70.00px;background:#8b6427"><span style="color:#fff">isclose (/home/gaogao...</span></div>
<div class="s" style="left:978.00px;top:179.88px;width:7.00px;background:#2f8a62"><span style="color:#fff">a</span></div>
<div class="s" style="left:905.00px;top:188.71px;width:5.50px;background:#2f8a62"><span style="color:#fff">a</span></div>
<div class="s" style="left:912.00px;top:188.71px;width:2.00px;background:#2f8a62"></div>
<div class="s" style="left:915.00px;top:188.71px;width:3.00px;background:#aab03f"></div>
<div class="s" style="left:919.00px;top:188.71px;width:1.00px;background:#236e5f"></div>
<div class="s" style="left:924.00px;top:188.71px;width:10.00px;background:#e03a97"><span style="color:#fff">a...</span></div>
<div class="s" style="left:936.00px;top:188.71px;width:6.00px;background:#e03a97"><span style="color:#fff">a</span></div>
<div class="s" style="left:943.00px;top:188.71px;width:28.00px;background:#b42047"><span style="color:#fff">within_...</span></div>
<div class="s" style="left:978.00px;top:188.71px;width:7.00px;background:#3b8bbb"><span style="color:#fff">_</span></div>
<div class="s" style="left:905.00px;top:197.54px;width:5.50px;background:#236e5f"><span style="color:#fff">n</span></div>
<div class="s" style="left:912.00px;top:197.54px;width:2.00px;background:#236e5f"></div>
<div class="s" style="left:915.00px;top:197.54px;width:2.00px;background:#5a46d9"></div>
<div class="s" style="left:925.00px;top:197.54px;width:9.00px;background:#5a46d9"><span style="color:#fff">a...</span></div>
<div class="s" style="left:936.00px;top:197.54px;width:6.00px;background:#5a46d9"><span style="color:#fff">n</span></div>
<div class="s" style="left:944.00px;top:197.54px;width:0.70px;background:#aab03f"></div>
<div class="s" style="left:945.00px;top:197.54px;width:6.50px;background:#7e7a34"><span style="color:#fff">_</span></div>
<div class="s" style="left:955.00px;top:197.54px;width:2.00px;background:#f3b3d6"></div>
<div class="s" style="left:965.00px;top:197.54px;width:5.30px;background:#57c58a"></div>
<div class="s" style="left:979.00px;top:197.54px;width:0.70px;background:#c9a88a"></div>
<div class="s" style="left:981.00px;top:197.54px;width:4.00px;background:#d990ea"></div>
<div class="s" style="left:925.50px;top:206.37px;width:8.50px;background:#2f8a62"><span style="color:#fff">a</span></div>
<div class="s" style="left:936.50px;top:206.37px;width:5.50px;background:#2f8a62"></div>
<div class="s" style="left:946.00px;top:206.37px;width:5.50px;background:#a42a85"><span style="color:#fff">s</span></div>
<div class="s" style="left:966.00px;top:206.37px;width:4.00px;background:#a42a85"></div>
<div class="s" style="left:926.00px;top:215.20px;width:8.00px;background:#3b8bbb"><span style="color:#fff">_</span></div>
<div class="s" style="left:937.00px;top:215.20px;width:5.00px;background:#3b8bbb"></div>
<div class="s" style="left:946.00px;top:215.20px;width:3.00px;background:#57c58a"></div>
<div class="s" style="left:951.00px;top:215.20px;width:0.70px;background:#7e7a34"></div>
<div class="s" style="left:966.00px;top:215.20px;width:2.50px;background:#57c58a"></div>
<div class="s" style="left:970.00px;top:215.20px;width:0.70px;background:#7e7a34"></div>
<div class="s" style="left:927.00px;top:224.03px;width:0.70px;background:#c9a88a"></div>
<div class="s" style="left:929.00px;top:224.03px;width:5.00px;background:#d990ea"></div>
<div class="s" style="left:937.50px;top:224.03px;width:4.50px;background:#d990ea"></div>
<div class="s" style="left:947.00px;top:224.03px;width:0.70px;background:#c9a88a"></div>
<div class="s" style="left:967.00px;top:224.03px;width:0.70px;background:#c9a88a"></div>
<div style="left:5.00px;top:338.80px;width:1008.00px;height:14.00px;background:#f1f1f1;border-top:0.7px solid #dcdcdc;"></div>
<div style="left:5.60px;top:341.10px;width:53.60px;height:12.10px;background:#f7f7f7;border:0.7px solid #d8d8d8;border-bottom:none;"></div>
<div class="n" style="left:11.00px;top:343.22px;font-size:7.2px;line-height:8.64px;color:#50565f;font-family:'Liberation Sans', sans-serif;white-space:pre;transform:scaleX(0.78);transform-origin:0 50%;">Current Selection</div>
<svg style="position:absolute;left:985px;top:340px" width="24" height="12" viewBox="0 0 24 12"><path d="M1.3 1.3 H9.4" stroke="#2a2a2a" stroke-width="0.9"/><path d="M5.35 10.2 V4.6" stroke="#2a2a2a" stroke-width="1.5"/><path d="M2.9 5.4 L5.35 2.9 L7.8 5.4 Z" fill="#2a2a2a"/><path d="M16.6 4.0 L19.2 6.6 L21.8 4.0" fill="none" stroke="#2a2a2a" stroke-width="1.1"/></svg>
<div class="n" style="left:10.00px;top:358.14px;font-size:8.0px;line-height:9.60px;color:#5a6068;font-family:'Liberation Sans', sans-serif;white-space:pre;transform:scaleX(0.86);transform-origin:0 50%;">Slice Details</div>
<div class="n" style="left:11.30px;top:371.40px;font-size:6.8px;line-height:8.16px;color:#636363;font-family:'Liberation Sans', sans-serif;white-space:pre;transform:scaleX(0.9);transform-origin:0 50%;">Name</div>
<div class="n" style="left:91.20px;top:371.55px;font-size:6.5px;line-height:7.80px;color:#9a9a9a;font-family:'Liberation Sans', sans-serif;white-space:pre;transform:scaleX(0.93);transform-origin:0 50%;">summation_of_cost_derivative (example/src/gradient_descent.py:75)</div>
<div class="n" style="left:11.30px;top:381.59px;font-size:6.8px;line-height:8.16px;color:#636363;font-family:'Liberation Sans', sans-serif;white-space:pre;transform:scaleX(0.9);transform-origin:0 50%;">Category</div>
<div class="n" style="left:91.20px;top:381.74px;font-size:6.5px;line-height:7.80px;color:#9a9a9a;font-family:'Liberation Sans', sans-serif;white-space:pre;transform:scaleX(0.93);transform-origin:0 50%;">FEE</div>
<div class="n" style="left:11.30px;top:391.78px;font-size:6.8px;line-height:8.16px;color:#636363;font-family:'Liberation Sans', sans-serif;white-space:pre;transform:scaleX(0.9);transform-origin:0 50%;">Start time</div>
<div class="n" style="left:91.20px;top:391.93px;font-size:6.5px;line-height:7.80px;color:#9a9a9a;font-family:'Liberation Sans', sans-serif;white-space:pre;transform:scaleX(0.93);transform-origin:0 50%;">8ms 192us 700ns</div>
<div class="n" style="left:11.30px;top:401.97px;font-size:6.8px;line-height:8.16px;color:#636363;font-family:'Liberation Sans', sans-serif;white-space:pre;transform:scaleX(0.9);transform-origin:0 50%;">Duration</div>
<div class="n" style="left:91.20px;top:402.12px;font-size:6.5px;line-height:7.80px;color:#9a9a9a;font-family:'Liberation Sans', sans-serif;white-space:pre;transform:scaleX(0.93);transform-origin:0 50%;">29us</div>
<div class="n" style="left:11.30px;top:412.16px;font-size:6.8px;line-height:8.16px;color:#636363;font-family:'Liberation Sans', sans-serif;white-space:pre;transform:scaleX(0.9);transform-origin:0 50%;">type</div>
<div class="n" style="left:91.20px;top:412.31px;font-size:6.5px;line-height:7.80px;color:#9a9a9a;font-family:'Liberation Sans', sans-serif;white-space:pre;transform:scaleX(0.93);transform-origin:0 50%;">internal_slice</div>
<div class="n" style="left:11.30px;top:422.35px;font-size:6.8px;line-height:8.16px;color:#636363;font-family:'Liberation Sans', sans-serif;white-space:pre;transform:scaleX(0.9);transform-origin:0 50%;">track_id</div>
<div class="n" style="left:91.20px;top:422.50px;font-size:6.5px;line-height:7.80px;color:#9a9a9a;font-family:'Liberation Sans', sans-serif;white-space:pre;transform:scaleX(0.93);transform-origin:0 50%;">0</div>
<div class="n" style="left:11.30px;top:432.54px;font-size:6.8px;line-height:8.16px;color:#636363;font-family:'Liberation Sans', sans-serif;white-space:pre;transform:scaleX(0.9);transform-origin:0 50%;">depth</div>
<div class="n" style="left:91.20px;top:432.69px;font-size:6.5px;line-height:7.80px;color:#9a9a9a;font-family:'Liberation Sans', sans-serif;white-space:pre;transform:scaleX(0.93);transform-origin:0 50%;">2</div>
<div class="n" style="left:11.30px;top:442.73px;font-size:6.8px;line-height:8.16px;color:#636363;font-family:'Liberation Sans', sans-serif;white-space:pre;transform:scaleX(0.9);transform-origin:0 50%;">stack_id</div>
<div class="n" style="left:91.20px;top:442.88px;font-size:6.5px;line-height:7.80px;color:#9a9a9a;font-family:'Liberation Sans', sans-serif;white-space:pre;transform:scaleX(0.93);transform-origin:0 50%;">2372463328701694</div>
<div class="n" style="left:11.30px;top:452.92px;font-size:6.8px;line-height:8.16px;color:#636363;font-family:'Liberation Sans', sans-serif;white-space:pre;transform:scaleX(0.9);transform-origin:0 50%;">parent_stack_id</div>
<div class="n" style="left:91.20px;top:453.06px;font-size:6.5px;line-height:7.80px;color:#9a9a9a;font-family:'Liberation Sans', sans-serif;white-space:pre;transform:scaleX(0.93);transform-origin:0 50%;">2597963731413117</div>
<div class="n" style="left:11.30px;top:463.11px;font-size:6.8px;line-height:8.16px;color:#636363;font-family:'Liberation Sans', sans-serif;white-space:pre;transform:scaleX(0.9);transform-origin:0 50%;">parent_id</div>
<div class="n" style="left:91.20px;top:463.25px;font-size:6.5px;line-height:7.80px;color:#9a9a9a;font-family:'Liberation Sans', sans-serif;white-space:pre;transform:scaleX(0.93);transform-origin:0 50%;">6802</div>
<div class="n" style="left:11.30px;top:473.30px;font-size:6.8px;line-height:8.16px;color:#636363;font-family:'Liberation Sans', sans-serif;white-space:pre;transform:scaleX(0.9);transform-origin:0 50%;">arg_set_id</div>
<div class="n" style="left:91.20px;top:473.44px;font-size:6.5px;line-height:7.80px;color:#9a9a9a;font-family:'Liberation Sans', sans-serif;white-space:pre;transform:scaleX(0.93);transform-origin:0 50%;">0</div>
<div style="left:509.90px;top:369.30px;width:490.60px;height:206.10px;background:#f3f2f1;"></div>
<div style="left:528.00px;top:369.30px;width:0.80px;height:206.10px;background:#cfcfcf;"></div>
<div style="left:509.9px;top:369.3px;width:490.6px;height:206.1px;overflow:hidden;">
<div style="left:0;top:2.50px;width:14.3px;text-align:right;font-family:'Liberation Mono',monospace;font-size:5.6px;line-height:9.4px;color:#a0a0a0;white-space:pre">75</div>
<div class="c" style="left:23.8px;top:2.80px;font-family:'Liberation Mono',monospace;font-size:6.5px;line-height:9.4px;white-space:pre;transform:scaleX(0.885);transform-origin:0 50%"><span style="color:#3f8fc0">def</span><span style="color:#333"> </span><span style="color:#d9486a">summation_of_cost_derivative</span><span style="color:#a2a2a2">(</span><span style="color:#333">index, end=m</span><span style="color:#a2a2a2">):</span></div>
<div style="left:0;top:11.93px;width:14.3px;text-align:right;font-family:'Liberation Mono',monospace;font-size:5.6px;line-height:9.4px;color:#a0a0a0;white-space:pre">76</div>
<div class="c" style="left:23.8px;top:12.23px;font-family:'Liberation Mono',monospace;font-size:6.5px;line-height:9.4px;white-space:pre;transform:scaleX(0.885);transform-origin:0 50%"><span style="color:#8aaa36">    &quot;&quot;&quot;</span></div>
<div style="left:0;top:21.36px;width:14.3px;text-align:right;font-family:'Liberation Mono',monospace;font-size:5.6px;line-height:9.4px;color:#a0a0a0;white-space:pre">77</div>
<div class="c" style="left:23.8px;top:21.66px;font-family:'Liberation Mono',monospace;font-size:6.5px;line-height:9.4px;white-space:pre;transform:scaleX(0.885);transform-origin:0 50%"><span style="color:#8aaa36">    Calculates the sum of cost function derivative</span></div>
<div style="left:0;top:30.79px;width:14.3px;text-align:right;font-family:'Liberation Mono',monospace;font-size:5.6px;line-height:9.4px;color:#a0a0a0;white-space:pre">78</div>
<div class="c" style="left:23.8px;top:31.09px;font-family:'Liberation Mono',monospace;font-size:6.5px;line-height:9.4px;white-space:pre;transform:scaleX(0.885);transform-origin:0 50%"><span style="color:#8aaa36">    :param index: index wrt derivative is being calculated</span></div>
<div style="left:0;top:40.22px;width:14.3px;text-align:right;font-family:'Liberation Mono',monospace;font-size:5.6px;line-height:9.4px;color:#a0a0a0;white-space:pre">79</div>
<div class="c" style="left:23.8px;top:40.52px;font-family:'Liberation Mono',monospace;font-size:6.5px;line-height:9.4px;white-space:pre;transform:scaleX(0.885);transform-origin:0 50%"><span style="color:#8aaa36">    :param end: value where summation ends, default is m, number of examples</span></div>
<div style="left:0;top:49.65px;width:14.3px;text-align:right;font-family:'Liberation Mono',monospace;font-size:5.6px;line-height:9.4px;color:#a0a0a0;white-space:pre">80</div>
<div class="c" style="left:23.8px;top:49.95px;font-family:'Liberation Mono',monospace;font-size:6.5px;line-height:9.4px;white-space:pre;transform:scaleX(0.885);transform-origin:0 50%"><span style="color:#8aaa36">    :return: Returns the summation of cost derivative</span></div>
<div style="left:0;top:59.08px;width:14.3px;text-align:right;font-family:'Liberation Mono',monospace;font-size:5.6px;line-height:9.4px;color:#a0a0a0;white-space:pre">81</div>
<div class="c" style="left:23.8px;top:59.38px;font-family:'Liberation Mono',monospace;font-size:6.5px;line-height:9.4px;white-space:pre;transform:scaleX(0.885);transform-origin:0 50%"><span style="color:#8aaa36">    Note: If index is -1, this means we are calculating summation wrt to biased</span></div>
<div style="left:0;top:68.51px;width:14.3px;text-align:right;font-family:'Liberation Mono',monospace;font-size:5.6px;line-height:9.4px;color:#a0a0a0;white-space:pre">82</div>
<div class="c" style="left:23.8px;top:68.81px;font-family:'Liberation Mono',monospace;font-size:6.5px;line-height:9.4px;white-space:pre;transform:scaleX(0.885);transform-origin:0 50%"><span style="color:#8aaa36">        parameter.</span></div>
<div style="left:0;top:77.94px;width:14.3px;text-align:right;font-family:'Liberation Mono',monospace;font-size:5.6px;line-height:9.4px;color:#a0a0a0;white-space:pre">83</div>
<div class="c" style="left:23.8px;top:78.24px;font-family:'Liberation Mono',monospace;font-size:6.5px;line-height:9.4px;white-space:pre;transform:scaleX(0.885);transform-origin:0 50%"><span style="color:#8aaa36">    &quot;&quot;&quot;</span></div>
<div style="left:0;top:87.37px;width:14.3px;text-align:right;font-family:'Liberation Mono',monospace;font-size:5.6px;line-height:9.4px;color:#a0a0a0;white-space:pre">84</div>
<div class="c" style="left:23.8px;top:87.67px;font-family:'Liberation Mono',monospace;font-size:6.5px;line-height:9.4px;white-space:pre;transform:scaleX(0.885);transform-origin:0 50%"><span style="color:#333">    summation_value </span><span style="color:#a2a2a2">=</span><span style="color:#333"> </span><span style="color:#b92b6b">0</span></div>
<div style="left:0;top:96.80px;width:14.3px;text-align:right;font-family:'Liberation Mono',monospace;font-size:5.6px;line-height:9.4px;color:#a0a0a0;white-space:pre">85</div>
<div class="c" style="left:23.8px;top:97.10px;font-family:'Liberation Mono',monospace;font-size:6.5px;line-height:9.4px;white-space:pre;transform:scaleX(0.885);transform-origin:0 50%"><span style="color:#333">    </span><span style="color:#3f8fc0">for</span><span style="color:#333"> i </span><span style="color:#3f8fc0">in</span><span style="color:#333"> </span><span style="color:#5a9e5a">range</span><span style="color:#a2a2a2">(</span><span style="color:#333">end</span><span style="color:#a2a2a2">):</span></div>
<div style="left:0;top:106.23px;width:14.3px;text-align:right;font-family:'Liberation Mono',monospace;font-size:5.6px;line-height:9.4px;color:#a0a0a0;white-space:pre">86</div>
<div class="c" style="left:23.8px;top:106.53px;font-family:'Liberation Mono',monospace;font-size:6.5px;line-height:9.4px;white-space:pre;transform:scaleX(0.885);transform-origin:0 50%"><span style="color:#333">        </span><span style="color:#3f8fc0">if</span><span style="color:#333"> index </span><span style="color:#a2a2a2">==</span><span style="color:#333"> </span><span style="color:#b92b6b">-1</span><span style="color:#a2a2a2">:</span></div>
<div style="left:0;top:115.66px;width:14.3px;text-align:right;font-family:'Liberation Mono',monospace;font-size:5.6px;line-height:9.4px;color:#a0a0a0;white-space:pre">87</div>
<div class="c" style="left:23.8px;top:115.96px;font-family:'Liberation Mono',monospace;font-size:6.5px;line-height:9.4px;white-space:pre;transform:scaleX(0.885);transform-origin:0 50%"><span style="color:#333">            summation_value </span><span style="color:#a2a2a2">+=</span><span style="color:#333"> _error</span><span style="color:#a2a2a2">(</span><span style="color:#333">i</span><span style="color:#a2a2a2">)</span></div>
<div style="left:0;top:125.09px;width:14.3px;text-align:right;font-family:'Liberation Mono',monospace;font-size:5.6px;line-height:9.4px;color:#a0a0a0;white-space:pre">88</div>
<div class="c" style="left:23.8px;top:125.39px;font-family:'Liberation Mono',monospace;font-size:6.5px;line-height:9.4px;white-space:pre;transform:scaleX(0.885);transform-origin:0 50%"><span style="color:#333">        </span><span style="color:#3f8fc0">else</span><span style="color:#a2a2a2">:</span></div>
<div style="left:0;top:134.52px;width:14.3px;text-align:right;font-family:'Liberation Mono',monospace;font-size:5.6px;line-height:9.4px;color:#a0a0a0;white-space:pre">89</div>
<div class="c" style="left:23.8px;top:134.82px;font-family:'Liberation Mono',monospace;font-size:6.5px;line-height:9.4px;white-space:pre;transform:scaleX(0.885);transform-origin:0 50%"><span style="color:#333">            summation_value </span><span style="color:#a2a2a2">+=</span><span style="color:#333"> _error</span><span style="color:#a2a2a2">(</span><span style="color:#333">i</span><span style="color:#a2a2a2">)</span><span style="color:#a2a2a2"> * </span><span style="color:#333">train_data</span><span style="color:#a2a2a2">[</span><span style="color:#333">i</span><span style="color:#a2a2a2">][</span><span style="color:#b92b6b">0</span><span style="color:#a2a2a2">][</span><span style="color:#333">index</span><span style="color:#a2a2a2">]</span></div>
<div style="left:0;top:143.95px;width:14.3px;text-align:right;font-family:'Liberation Mono',monospace;font-size:5.6px;line-height:9.4px;color:#a0a0a0;white-space:pre">90</div>
<div class="c" style="left:23.8px;top:144.25px;font-family:'Liberation Mono',monospace;font-size:6.5px;line-height:9.4px;white-space:pre;transform:scaleX(0.885);transform-origin:0 50%"><span style="color:#333">    </span><span style="color:#3f8fc0">return</span><span style="color:#333"> summation_value</span></div>
<div style="left:0;top:153.38px;width:14.3px;text-align:right;font-family:'Liberation Mono',monospace;font-size:5.6px;line-height:9.4px;color:#a0a0a0;white-space:pre">91</div>
<div class="c" style="left:23.8px;top:153.68px;font-family:'Liberation Mono',monospace;font-size:6.5px;line-height:9.4px;white-space:pre;transform:scaleX(0.885);transform-origin:0 50%"></div>
<div style="left:0;top:162.81px;width:14.3px;text-align:right;font-family:'Liberation Mono',monospace;font-size:5.6px;line-height:9.4px;color:#a0a0a0;white-space:pre">92</div>
<div class="c" style="left:23.8px;top:163.11px;font-family:'Liberation Mono',monospace;font-size:6.5px;line-height:9.4px;white-space:pre;transform:scaleX(0.885);transform-origin:0 50%"></div>
<div style="left:0;top:172.24px;width:14.3px;text-align:right;font-family:'Liberation Mono',monospace;font-size:5.6px;line-height:9.4px;color:#a0a0a0;white-space:pre">93</div>
<div class="c" style="left:23.8px;top:172.54px;font-family:'Liberation Mono',monospace;font-size:6.5px;line-height:9.4px;white-space:pre;transform:scaleX(0.885);transform-origin:0 50%"><span style="color:#3f8fc0">def</span><span style="color:#333"> </span><span style="color:#d9486a">get_cost_derivative</span><span style="color:#a2a2a2">(</span><span style="color:#333">index</span><span style="color:#a2a2a2">):</span></div>
<div style="left:0;top:181.67px;width:14.3px;text-align:right;font-family:'Liberation Mono',monospace;font-size:5.6px;line-height:9.4px;color:#a0a0a0;white-space:pre">94</div>
<div class="c" style="left:23.8px;top:181.97px;font-family:'Liberation Mono',monospace;font-size:6.5px;line-height:9.4px;white-space:pre;transform:scaleX(0.885);transform-origin:0 50%"><span style="color:#8aaa36">    &quot;&quot;&quot;</span></div>
<div style="left:0;top:191.10px;width:14.3px;text-align:right;font-family:'Liberation Mono',monospace;font-size:5.6px;line-height:9.4px;color:#a0a0a0;white-space:pre">95</div>
<div class="c" style="left:23.8px;top:191.40px;font-family:'Liberation Mono',monospace;font-size:6.5px;line-height:9.4px;white-space:pre;transform:scaleX(0.885);transform-origin:0 50%"><span style="color:#8aaa36">    :param index: index of the parameter vector wrt to derivative is to be calculated</span></div>
<div style="left:0;top:200.53px;width:14.3px;text-align:right;font-family:'Liberation Mono',monospace;font-size:5.6px;line-height:9.4px;color:#a0a0a0;white-space:pre">96</div>
<div class="c" style="left:23.8px;top:200.83px;font-family:'Liberation Mono',monospace;font-size:6.5px;line-height:9.4px;white-space:pre;transform:scaleX(0.885);transform-origin:0 50%"><span style="color:#8aaa36">    :return: derivative wrt to that index</span></div>
</div>
<div style="left:992.00px;top:475.00px;width:7.70px;height:28.70px;background:#c3c3c3;"></div>
<svg style="position:absolute;left:993px;top:372px" width="6" height="4" viewBox="0 0 6 4"><path d="M0.5 3.3 L3 0.7 L5.5 3.3 Z" fill="#555"/></svg>
<svg style="position:absolute;left:993px;top:570px" width="6" height="4" viewBox="0 0 6 4"><path d="M0.5 0.7 L3 3.3 L5.5 0.7 Z" fill="#555"/></svg>
<div style="left:1005.20px;top:352.80px;width:7.80px;height:228.20px;background:#f1f1f1;"></div>
<div style="left:1005.60px;top:361.30px;width:6.90px;height:204.70px;background:#c1c1c1;"></div>
<svg style="position:absolute;left:1006px;top:355px" width="6" height="4" viewBox="0 0 6 4"><path d="M0.5 3.3 L3 0.7 L5.5 3.3 Z" fill="#777"/></svg>
<svg style="position:absolute;left:1006px;top:570px" width="6" height="4" viewBox="0 0 6 4"><path d="M0.5 0.7 L3 3.3 L5.5 0.7 Z" fill="#555"/></svg>
<svg style="position:absolute;left:0;top:0" width="1026" height="581" viewBox="0 0 1026 581"><g transform="translate(891.0,548.3)" fill="none" stroke="rgba(255,255,255,0.55)" stroke-width="2.0" stroke-linecap="round"><circle cx="5" cy="5.6" r="1.7"/><path d="M6.7 3.8 V6.6 Q6.9 8 8.2 7.5 Q9.8 6.8 9.8 5.2 A4.8 4.8 0 1 0 7.6 9.7"/></g><g transform="translate(902.7,548.3)" fill="none" stroke="rgba(255,255,255,0.55)" stroke-width="2.0" stroke-linecap="round"><path d="M3.6 0.4 L0.8 1.3 M0.3 3.2 H4 M2.2 1.1 V10.4 M2.1 3.6 L0.2 7.6 M2.4 4.6 L4 6.4 M5.4 0.5 L9.6 3.4 M9.6 0.5 L5.4 3.4 M4.8 4.6 H10.3 M7.2 3.8 L5.1 7.1 M6.1 6.6 V9.6 M6.1 6.6 H9.6 V9.1 M7.8 5.6 V10.5"/></g><g transform="translate(914.4,548.3)" fill="none" stroke="rgba(255,255,255,0.55)" stroke-width="2.0" stroke-linecap="round"><path d="M1.7 3.9 H8.9 M5.2 0.3 V9.8 M0.1 9.8 H10.6"/></g><g transform="translate(926.3,548.3)" fill="none" stroke="rgba(255,255,255,0.55)" stroke-width="2.0" stroke-linecap="round"><path d="M0.2 3.1 H3.5 M2 0.3 V9.9 L1.1 9.4 M0.2 7.6 L3.6 5.8 M4.6 0.9 H10.1 V3.1 H4.6 M4.6 0.9 V6.2 L3.9 10.3 M7.4 3.6 V10 M5.6 4.6 V6.6 H9.4 V4.6 M5.3 7.4 V10 H10.2 V7.4"/></g><g transform="translate(938.2,548.3)" fill="none" stroke="rgba(255,255,255,0.55)" stroke-width="2.0" stroke-linecap="round"><path d="M5.3 0.2 L0.3 4.6 M5.3 0.2 L10.4 4.6 M2.5 5 H8.2 M1.5 7.1 H9.2 M5.3 5 V10 M3 7.9 L3.8 9.3 M7.8 7.9 L7 9.3 M0.3 10.1 H10.4"/></g><g transform="translate(950.6,548.3)" fill="none" stroke="rgba(255,255,255,0.55)" stroke-width="2.0" stroke-linecap="round"><path d="M0.2 3.1 H3.5 M2 0.3 V9.9 L1.1 9.4 M0.2 7.6 L3.6 5.8 M4.6 2.4 H10.2 M7.3 0.2 V4.4 M5 4.7 H9.5 L5 10.4 M5.8 6.3 L10.3 10.4"/></g><g transform="translate(962.8,548.3)" fill="none" stroke="rgba(255,255,255,0.55)" stroke-width="2.0" stroke-linecap="round"><path d="M0.3 3.1 H10.2 M5.2 0.2 V10.4 M5 3.3 L0.4 8.6 M5.4 3.3 L10.2 8.4 M7.6 0.8 L8.6 1.9"/></g><g transform="translate(975.1,548.3)" fill="none" stroke="rgba(255,255,255,0.55)" stroke-width="2.0" stroke-linecap="round"><path d="M1.8 0.3 L2.6 1.3 M0.3 3.1 H3.6 L0.5 7.1 M2.1 5.3 V10.4 M2.7 6.3 L3.9 7.4 M5.4 3.9 H9.7 M7.6 0.5 V9.8 M4.6 9.8 H10.4"/></g><g transform="translate(987.0,548.3)" fill="none" stroke="rgba(255,255,255,0.55)" stroke-width="2.0" stroke-linecap="round"><path d="M10.3 0.9 H0.8 V10 H10.4 M3 2.9 L8.6 8.4 M8.1 2.9 L3 8.6"/></g><g transform="translate(891.0,548.3)" fill="none" stroke="#7e7e7e" stroke-width="1.05"><circle cx="5" cy="5.6" r="1.7"/><path d="M6.7 3.8 V6.6 Q6.9 8 8.2 7.5 Q9.8 6.8 9.8 5.2 A4.8 4.8 0 1 0 7.6 9.7"/></g><g transform="translate(902.7,548.3)" fill="none" stroke="#7e7e7e" stroke-width="1.05"><path d="M3.6 0.4 L0.8 1.3 M0.3 3.2 H4 M2.2 1.1 V10.4 M2.1 3.6 L0.2 7.6 M2.4 4.6 L4 6.4 M5.4 0.5 L9.6 3.4 M9.6 0.5 L5.4 3.4 M4.8 4.6 H10.3 M7.2 3.8 L5.1 7.1 M6.1 6.6 V9.6 M6.1 6.6 H9.6 V9.1 M7.8 5.6 V10.5"/></g><g transform="translate(914.4,548.3)" fill="none" stroke="#7e7e7e" stroke-width="1.05"><path d="M1.7 3.9 H8.9 M5.2 0.3 V9.8 M0.1 9.8 H10.6"/></g><g transform="translate(926.3,548.3)" fill="none" stroke="#7e7e7e" stroke-width="1.05"><path d="M0.2 3.1 H3.5 M2 0.3 V9.9 L1.1 9.4 M0.2 7.6 L3.6 5.8 M4.6 0.9 H10.1 V3.1 H4.6 M4.6 0.9 V6.2 L3.9 10.3 M7.4 3.6 V10 M5.6 4.6 V6.6 H9.4 V4.6 M5.3 7.4 V10 H10.2 V7.4"/></g><g transform="translate(938.2,548.3)" fill="none" stroke="#7e7e7e" stroke-width="1.05"><path d="M5.3 0.2 L0.3 4.6 M5.3 0.2 L10.4 4.6 M2.5 5 H8.2 M1.5 7.1 H9.2 M5.3 5 V10 M3 7.9 L3.8 9.3 M7.8 7.9 L7 9.3 M0.3 10.1 H10.4"/></g><g transform="translate(950.6,548.3)" fill="none" stroke="#7e7e7e" stroke-width="1.05"><path d="M0.2 3.1 H3.5 M2 0.3 V9.9 L1.1 9.4 M0.2 7.6 L3.6 5.8 M4.6 2.4 H10.2 M7.3 0.2 V4.4 M5 4.7 H9.5 L5 10.4 M5.8 6.3 L10.3 10.4"/></g><g transform="translate(962.8,548.3)" fill="none" stroke="#7e7e7e" stroke-width="1.05"><path d="M0.3 3.1 H10.2 M5.2 0.2 V10.4 M5 3.3 L0.4 8.6 M5.4 3.3 L10.2 8.4 M7.6 0.8 L8.6 1.9"/></g><g transform="translate(975.1,548.3)" fill="none" stroke="#7e7e7e" stroke-width="1.05"><path d="M1.8 0.3 L2.6 1.3 M0.3 3.1 H3.6 L0.5 7.1 M2.1 5.3 V10.4 M2.7 6.3 L3.9 7.4 M5.4 3.9 H9.7 M7.6 0.5 V9.8 M4.6 9.8 H10.4"/></g><g transform="translate(987.0,548.3)" fill="none" stroke="#7e7e7e" stroke-width="1.05"><path d="M10.3 0.9 H0.8 V10 H10.4 M3 2.9 L8.6 8.4 M8.1 2.9 L3 8.6"/></g></svg>
</body></html>
